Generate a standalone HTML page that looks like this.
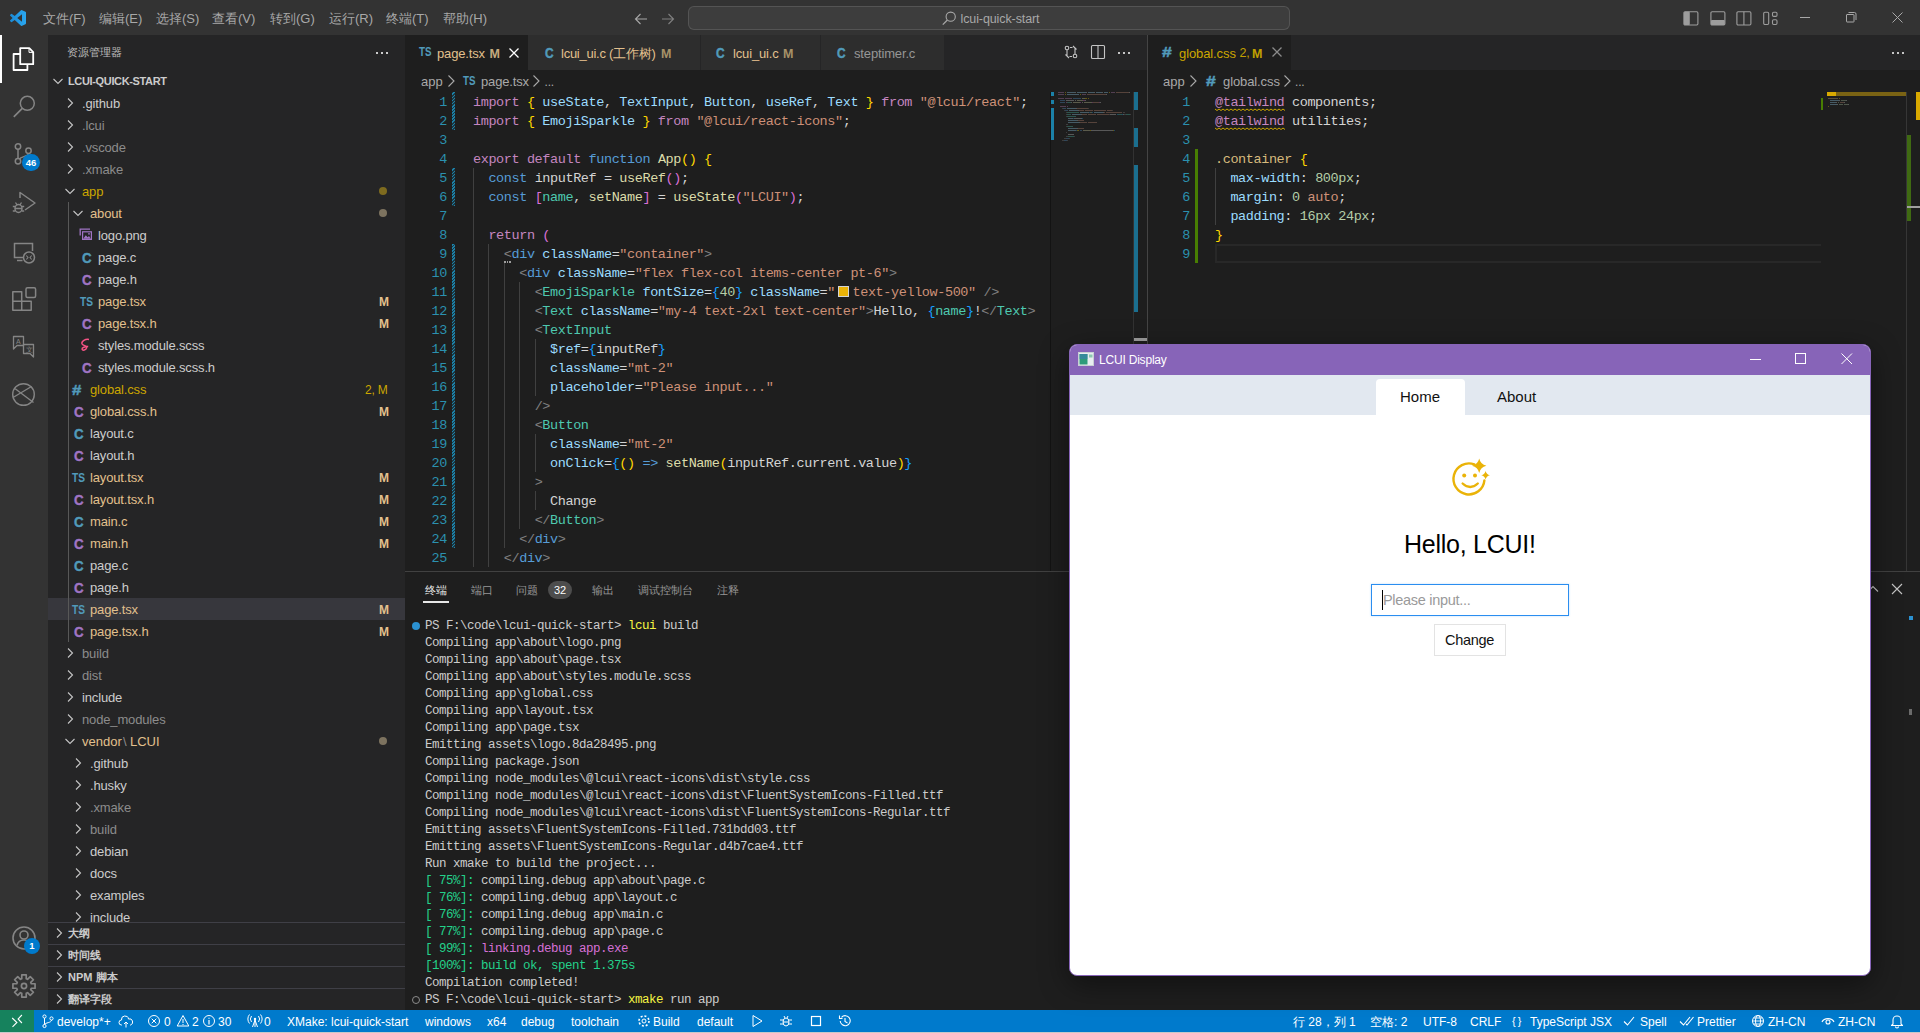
<!DOCTYPE html><html><head><meta charset="utf-8"><style>
*{box-sizing:border-box}
body{margin:0;width:1920px;height:1033px;overflow:hidden;background:#1e1e1e;position:relative;font-family:"Liberation Sans",sans-serif;color:#cccccc}
.a{position:absolute}
.t{position:absolute;white-space:pre}
svg{position:absolute;overflow:visible}
.code{position:absolute;white-space:pre;font-family:"Liberation Mono",monospace;font-size:13.5px;letter-spacing:-0.4px;line-height:19px;color:#d4d4d4}
.term{position:absolute;white-space:pre;font-family:"Liberation Mono",monospace;font-size:12.5px;letter-spacing:-0.5px;line-height:17px;color:#cccccc}
</style></head><body>
<div class="a" style="left:0px;top:0px;width:1920px;height:35px;background:#333333;"></div><svg style="left:10px;top:10px" width="16" height="16" viewBox="0 0 100 100"><defs><linearGradient id="vg" x1="0" y1="0" x2="1" y2="0"><stop offset="0" stop-color="#1b8ad6"/><stop offset="1" stop-color="#2aa7f0"/></linearGradient></defs><path d="M96.46 10.8L75.86.87a6.23 6.23 0 0 0-7.1 1.2L29.33 38.04 12.15 25a4.16 4.16 0 0 0-5.32.24L1.36 30.2a4.17 4.17 0 0 0 0 6.16L16.26 50 1.35 63.6a4.17 4.17 0 0 0 0 6.16l5.5 4.99a4.16 4.16 0 0 0 5.32.24l17.18-13.04L68.77 97.9a6.23 6.23 0 0 0 7.1 1.2l20.6-9.920a6.25 6.25 0 0 0 3.530-5.63V16.43a6.25 6.25 0 0 0-3.54-5.63zM75.02 72.7L45.11 50l29.9-22.7v45.4z" fill="url(#vg)"/></svg><div class="t" style="left:43px;top:12.0px;font-size:13px;height:13px;line-height:13px;color:#a8a8a8;font-weight:normal;font-family:'Liberation Sans',sans-serif;">文件(F)</div><div class="t" style="left:99px;top:12.0px;font-size:13px;height:13px;line-height:13px;color:#a8a8a8;font-weight:normal;font-family:'Liberation Sans',sans-serif;">编辑(E)</div><div class="t" style="left:156px;top:12.0px;font-size:13px;height:13px;line-height:13px;color:#a8a8a8;font-weight:normal;font-family:'Liberation Sans',sans-serif;">选择(S)</div><div class="t" style="left:212px;top:12.0px;font-size:13px;height:13px;line-height:13px;color:#a8a8a8;font-weight:normal;font-family:'Liberation Sans',sans-serif;">查看(V)</div><div class="t" style="left:270px;top:12.0px;font-size:13px;height:13px;line-height:13px;color:#a8a8a8;font-weight:normal;font-family:'Liberation Sans',sans-serif;">转到(G)</div><div class="t" style="left:329px;top:12.0px;font-size:13px;height:13px;line-height:13px;color:#a8a8a8;font-weight:normal;font-family:'Liberation Sans',sans-serif;">运行(R)</div><div class="t" style="left:386px;top:12.0px;font-size:13px;height:13px;line-height:13px;color:#a8a8a8;font-weight:normal;font-family:'Liberation Sans',sans-serif;">终端(T)</div><div class="t" style="left:443px;top:12.0px;font-size:13px;height:13px;line-height:13px;color:#a8a8a8;font-weight:normal;font-family:'Liberation Sans',sans-serif;">帮助(H)</div><svg style="left:633px;top:11px" width="16" height="16" viewBox="0 0 16 16"><path d="M14 8 H2.5 M7.5 3 L2.5 8 L7.5 13" stroke="#a8a8a8" stroke-width="1.1" fill="none"/></svg><svg style="left:660px;top:11px" width="16" height="16" viewBox="0 0 16 16"><path d="M2 8 H13.5 M8.5 3 L13.5 8 L8.5 13" stroke="#808080" stroke-width="1.1" fill="none"/></svg><div class="a" style="left:688px;top:6px;width:602px;height:24px;background:rgba(255,255,255,0.05);border:1px solid rgba(255,255,255,0.12);border-radius:6px"></div><svg style="left:941px;top:10px" width="16" height="16" viewBox="0 0 16 16"><circle cx="9.7" cy="6.7" r="4.6" stroke="#a8a8a8" stroke-width="1.1" fill="none"/><path d="M6.4 10 L1.8 14.6" stroke="#a8a8a8" stroke-width="1.3"/></svg><div class="t" style="left:960.5px;top:12.9px;font-size:12.5px;height:12.5px;line-height:12.5px;color:#a8a8a8;font-weight:normal;font-family:'Liberation Sans',sans-serif;letter-spacing:-0.1px;">lcui-quick-start</div><svg style="left:1683px;top:11px" width="16" height="16" viewBox="0 0 16 16"><rect x="0.9" y="0.7" width="14" height="13.3" rx="1.2" stroke="#9d9d9d" stroke-width="1.1" fill="none"/><rect x="1" y="0.8" width="5.8" height="13.1" rx="1" fill="#9d9d9d"/></svg><svg style="left:1709.5px;top:11px" width="16" height="16" viewBox="0 0 16 16"><rect x="0.9" y="0.7" width="14" height="13.3" rx="1.2" stroke="#9d9d9d" stroke-width="1.1" fill="none"/><rect x="1" y="9" width="13.8" height="4.9" rx="1" fill="#9d9d9d"/></svg><svg style="left:1735.5px;top:11px" width="16" height="16" viewBox="0 0 16 16"><rect x="0.9" y="0.7" width="14" height="13.3" rx="1.2" stroke="#9d9d9d" stroke-width="1.1" fill="none"/><path d="M7.9 0.7 V14" stroke="#9d9d9d" stroke-width="1.1"/></svg><svg style="left:1762.5px;top:11px" width="16" height="16" viewBox="0 0 16 16"><rect x="0.7" y="1.2" width="5" height="12.3" rx="1.2" stroke="#9d9d9d" stroke-width="1.1" fill="none"/><rect x="9.5" y="1.2" width="4.5" height="4.2" rx="1.2" stroke="#9d9d9d" stroke-width="1.1" fill="none"/><rect x="9.5" y="8.8" width="4.5" height="4.7" rx="1.2" stroke="#9d9d9d" stroke-width="1.1" fill="none"/></svg><div class="a" style="left:1800px;top:17px;width:10px;height:1px;background:#a8a8a8;"></div><svg style="left:1846px;top:12px" width="12" height="12" viewBox="0 0 12 12"><rect x="0.5" y="2.5" width="7.5" height="7.5" rx="0.5" stroke="#a8a8a8" fill="none"/><path d="M2.5 0.5 H8.5 A1.5 1.5 0 0 1 10 2 V8" stroke="#a8a8a8" fill="none"/></svg><svg style="left:1892px;top:12px" width="11" height="11" viewBox="0 0 11 11"><path d="M0.5 0.5 L10.5 10.5 M10.5 0.5 L0.5 10.5" stroke="#a8a8a8" stroke-width="1"/></svg><div class="a" style="left:0px;top:35px;width:48px;height:975px;background:#333333;"></div><div class="a" style="left:0px;top:35px;width:2px;height:48px;background:#ffffff;"></div><svg style="left:12px;top:47px" width="24" height="24" viewBox="0 0 24 24"><path d="M8.2 1.2 H17.3 L21.2 5.1 V17.2 H8.2 Z" stroke="#fff" stroke-width="1.8" fill="none" stroke-linejoin="round"/><path d="M17 1.5 V5.4 H21" stroke="#fff" stroke-width="1" fill="none"/><path d="M8.2 7 H1.6 V23 H15.4 V17.2" stroke="#fff" stroke-width="1.8" fill="none" stroke-linejoin="round"/></svg><svg style="left:12px;top:94px" width="24" height="24" viewBox="0 0 24 24"><circle cx="15.3" cy="9.3" r="7" stroke="#858585" stroke-width="1.5" fill="none"/><path d="M10.3 14.3 L1.8 22.8" stroke="#858585" stroke-width="1.7"/></svg><svg style="left:12px;top:142px" width="24" height="24" viewBox="0 0 24 24"><circle cx="6" cy="4.5" r="2.7" stroke="#858585" stroke-width="1.5" fill="none"/><circle cx="6" cy="19.3" r="2.7" stroke="#858585" stroke-width="1.5" fill="none"/><circle cx="16.5" cy="8.8" r="2.7" stroke="#858585" stroke-width="1.5" fill="none"/><path d="M6 7.2 V16.6 M16.5 11.5 C16.5 14.5 9 14.5 7.5 17" stroke="#858585" stroke-width="1.5" fill="none"/></svg><div class="a" style="left:22px;top:154px;width:18px;height:17px;border-radius:9px;background:#007acc;color:#fff;font-size:9.5px;font-weight:bold;text-align:center;line-height:17px">46</div><svg style="left:12px;top:191px" width="24" height="24" viewBox="0 0 24 24"><path d="M8 7 V1.5 L23 12 L13 19" stroke="#858585" stroke-width="1.5" fill="none" stroke-linejoin="round"/><ellipse cx="6.5" cy="17.5" rx="3.5" ry="4" stroke="#858585" stroke-width="1.5" fill="none"/><path d="M0.8 15.5 H3 M10 15.5 H12.2 M0.8 20 H3 M10 20 H12.2 M3.5 11.5 L5 13.8 M9.5 11.5 L8 13.8 M3 17.5 H10" stroke="#858585" stroke-width="1.3"/></svg><svg style="left:12px;top:240px" width="24" height="24" viewBox="0 0 24 24"><path d="M11 17.5 H2.5 V3.5 H20.5 V11" stroke="#858585" stroke-width="1.5" fill="none"/><path d="M5 20.5 H10.5" stroke="#858585" stroke-width="1.5"/><circle cx="17" cy="17.5" r="5.5" stroke="#858585" stroke-width="1.5" fill="#333"/><path d="M14.3 15.5 L16 17.5 L14.3 19.5 M19.7 15.5 L18 17.5 L19.7 19.5" stroke="#858585" stroke-width="1.1" fill="none"/></svg><svg style="left:12px;top:287px" width="24" height="24" viewBox="0 0 24 24"><path d="M0.8 4.8 H9.7 V14.2 H19.2 V23.2 H0.8 Z M9.7 14.2 V23.2 M0.8 14.2 H9.7" stroke="#858585" stroke-width="1.5" fill="none" stroke-linejoin="round"/><rect x="14" y="0.8" width="9.6" height="9.6" rx="1.5" stroke="#858585" stroke-width="1.5" fill="none"/></svg><svg style="left:12px;top:335px" width="24" height="24" viewBox="0 0 24 24"><path d="M1.5 1.5 H11.5 V10.5 H5 L1.5 14 Z" stroke="#858585" stroke-width="1.3" fill="none" stroke-linejoin="round"/><path d="M11.5 9.5 H21.5 V22 L18 18.5 H11.5 Z" stroke="#858585" stroke-width="1.3" fill="none" stroke-linejoin="round"/><text x="4" y="8.5" font-size="7" fill="#858585" font-family="Liberation Sans">A</text><text x="13.5" y="16.5" font-size="7" fill="#858585" font-family="Liberation Sans">文</text></svg><svg style="left:12px;top:383px" width="24" height="24" viewBox="0 0 24 24"><circle cx="11.5" cy="11.5" r="10.8" stroke="#858585" stroke-width="1.4" fill="none"/><path d="M1 14.5 L19.5 3.5 M3.2 5.8 L21.5 19.5" stroke="#858585" stroke-width="1.4"/></svg><svg style="left:12px;top:926px" width="24" height="24" viewBox="0 0 24 24"><circle cx="12" cy="12" r="11" stroke="#858585" stroke-width="1.6" fill="none"/><circle cx="12" cy="9" r="4" stroke="#858585" stroke-width="1.6" fill="none"/><path d="M5 19.5 C6 15 9 14 12 14 C15 14 18 15 19 19.5" stroke="#858585" stroke-width="1.6" fill="none"/></svg><div class="a" style="left:24px;top:938px;width:16px;height:16px;border-radius:8px;background:#007acc;color:#fff;font-size:9.5px;font-weight:bold;text-align:center;line-height:16px">1</div><svg style="left:12px;top:974px" width="24" height="24" viewBox="0 0 24 24"><path d="M23.07 9.76 L23.07 14.24 L19.26 14.25 L18.72 15.55 L21.42 18.24 L18.24 21.42 L15.55 18.72 L14.25 19.26 L14.24 23.07 L9.76 23.07 L9.75 19.26 L8.45 18.72 L5.76 21.42 L2.58 18.24 L5.28 15.55 L4.74 14.25 L0.93 14.24 L0.93 9.76 L4.74 9.75 L5.28 8.45 L2.58 5.76 L5.76 2.58 L8.45 5.28 L9.75 4.74 L9.76 0.93 L14.24 0.93 L14.25 4.74 L15.55 5.28 L18.24 2.58 L21.42 5.76 L18.72 8.45 L19.26 9.75 Z" stroke="#858585" stroke-width="1.7" fill="none" stroke-linejoin="round"/><circle cx="12" cy="12" r="2.6" stroke="#858585" stroke-width="1.7" fill="none"/></svg><div class="a" style="left:48px;top:35px;width:357px;height:975px;background:#252526;"></div><div class="t" style="left:67px;top:47.0px;font-size:11px;height:11px;line-height:11px;color:#bbbbbb;font-weight:normal;font-family:'Liberation Sans',sans-serif;">资源管理器</div><div class="a" style="left:376px;top:52px;width:2px;height:2px;background:#cccccc;"></div><div class="a" style="left:381px;top:52px;width:2px;height:2px;background:#cccccc;"></div><div class="a" style="left:386px;top:52px;width:2px;height:2px;background:#cccccc;"></div><div class="a" style="left:48px;top:70px;width:357px;height:852px;overflow:hidden"><div class="a" style="left:-48px;top:-70px;width:1920px;height:1033px"><div class="a" style="left:48px;top:598px;width:357px;height:22px;background:#37373d;"></div><div class="a" style="left:68px;top:202px;width:1px;height:440px;background:#585858;"></div><svg style="left:50px;top:73px" width="16" height="16" viewBox="0 0 16 16"><path d="M3.5 6 L8 10.5 L12.5 6" stroke="#c5c5c5" stroke-width="1.1" fill="none"/></svg><div class="t" style="left:68px;top:75.5px;font-size:11px;height:11px;line-height:11px;color:#cccccc;font-weight:bold;font-family:'Liberation Sans',sans-serif;letter-spacing:-0.35px;">LCUI-QUICK-START</div><svg style="left:62px;top:95px" width="16" height="16" viewBox="0 0 16 16"><path d="M6 3.5 L10.5 8 L6 12.5" stroke="#c5c5c5" stroke-width="1.1" fill="none"/></svg><div class="t" style="left:82px;top:96.5px;font-size:13px;height:13px;line-height:13px;color:#cccccc;font-weight:normal;font-family:'Liberation Sans',sans-serif;letter-spacing:-0.15px;">.github</div><svg style="left:62px;top:117px" width="16" height="16" viewBox="0 0 16 16"><path d="M6 3.5 L10.5 8 L6 12.5" stroke="#c5c5c5" stroke-width="1.1" fill="none"/></svg><div class="t" style="left:82px;top:118.5px;font-size:13px;height:13px;line-height:13px;color:#8c8c8c;font-weight:normal;font-family:'Liberation Sans',sans-serif;letter-spacing:-0.15px;">.lcui</div><svg style="left:62px;top:139px" width="16" height="16" viewBox="0 0 16 16"><path d="M6 3.5 L10.5 8 L6 12.5" stroke="#c5c5c5" stroke-width="1.1" fill="none"/></svg><div class="t" style="left:82px;top:140.5px;font-size:13px;height:13px;line-height:13px;color:#8c8c8c;font-weight:normal;font-family:'Liberation Sans',sans-serif;letter-spacing:-0.15px;">.vscode</div><svg style="left:62px;top:161px" width="16" height="16" viewBox="0 0 16 16"><path d="M6 3.5 L10.5 8 L6 12.5" stroke="#c5c5c5" stroke-width="1.1" fill="none"/></svg><div class="t" style="left:82px;top:162.5px;font-size:13px;height:13px;line-height:13px;color:#8c8c8c;font-weight:normal;font-family:'Liberation Sans',sans-serif;letter-spacing:-0.15px;">.xmake</div><svg style="left:62px;top:183px" width="16" height="16" viewBox="0 0 16 16"><path d="M3.5 6 L8 10.5 L12.5 6" stroke="#c5c5c5" stroke-width="1.1" fill="none"/></svg><div class="t" style="left:82px;top:184.5px;font-size:13px;height:13px;line-height:13px;color:#cca700;font-weight:normal;font-family:'Liberation Sans',sans-serif;letter-spacing:-0.15px;">app</div><div class="a" style="left:379px;top:187px;width:8px;height:8px;border-radius:4px;background:#7e6b1f"></div><svg style="left:70px;top:205px" width="16" height="16" viewBox="0 0 16 16"><path d="M3.5 6 L8 10.5 L12.5 6" stroke="#c5c5c5" stroke-width="1.1" fill="none"/></svg><div class="t" style="left:90px;top:206.5px;font-size:13px;height:13px;line-height:13px;color:#e2c08d;font-weight:normal;font-family:'Liberation Sans',sans-serif;letter-spacing:-0.15px;">about</div><div class="a" style="left:379px;top:209px;width:8px;height:8px;border-radius:4px;background:#7d735f"></div><svg style="left:79px;top:228px" width="14" height="14" viewBox="0 0 14 14"><path d="M1.2 7.5 V1.2 H11" stroke="#a074c4" stroke-width="1.3" fill="none"/><rect x="3" y="3.2" width="10" height="8.8" fill="#a074c4"/><rect x="4.2" y="4.4" width="7.6" height="6.4" fill="#252526"/><path d="M4.2 10.8 L6.8 7.2 L8.6 9.2 L10 8 L11.8 10.8 Z" fill="#a074c4"/><circle cx="10" cy="5.8" r="0.9" fill="#a074c4"/></svg><div class="t" style="left:98px;top:228.5px;font-size:13px;height:13px;line-height:13px;color:#cccccc;font-weight:normal;font-family:'Liberation Sans',sans-serif;letter-spacing:-0.15px;">logo.png</div><svg style="left:82px;top:247.0px" width="11.6" height="19.5"><text x="0" y="15.5" font-family="Liberation Sans" font-weight="bold" font-size="15.5" fill="#519aba" textLength="9.6" lengthAdjust="spacingAndGlyphs" stroke="#519aba" stroke-width="0.45">C</text></svg><div class="t" style="left:98px;top:250.5px;font-size:13px;height:13px;line-height:13px;color:#cccccc;font-weight:normal;font-family:'Liberation Sans',sans-serif;letter-spacing:-0.15px;">page.c</div><svg style="left:82px;top:269.0px" width="11.6" height="19.5"><text x="0" y="15.5" font-family="Liberation Sans" font-weight="bold" font-size="15.5" fill="#a074c4" textLength="9.6" lengthAdjust="spacingAndGlyphs" stroke="#a074c4" stroke-width="0.45">C</text></svg><div class="t" style="left:98px;top:272.5px;font-size:13px;height:13px;line-height:13px;color:#cccccc;font-weight:normal;font-family:'Liberation Sans',sans-serif;letter-spacing:-0.15px;">page.h</div><svg style="left:79.5px;top:293.0px" width="15" height="16.5"><text x="0" y="12.5" font-family="Liberation Sans" font-weight="bold" font-size="12.5" fill="#519aba" textLength="13" lengthAdjust="spacingAndGlyphs" stroke="#519aba" stroke-width="0.1">TS</text></svg><div class="t" style="left:98px;top:294.5px;font-size:13px;height:13px;line-height:13px;color:#e2c08d;font-weight:normal;font-family:'Liberation Sans',sans-serif;letter-spacing:-0.15px;">page.tsx</div><div class="t" style="left:379px;top:296.0px;font-size:12px;height:12px;line-height:12px;color:#e2c08d;font-weight:bold;font-family:'Liberation Sans',sans-serif;letter-spacing:-0.3px;">M</div><svg style="left:82px;top:313.0px" width="11.6" height="19.5"><text x="0" y="15.5" font-family="Liberation Sans" font-weight="bold" font-size="15.5" fill="#a074c4" textLength="9.6" lengthAdjust="spacingAndGlyphs" stroke="#a074c4" stroke-width="0.45">C</text></svg><div class="t" style="left:98px;top:316.5px;font-size:13px;height:13px;line-height:13px;color:#e2c08d;font-weight:normal;font-family:'Liberation Sans',sans-serif;letter-spacing:-0.15px;">page.tsx.h</div><div class="t" style="left:379px;top:318.0px;font-size:12px;height:12px;line-height:12px;color:#e2c08d;font-weight:bold;font-family:'Liberation Sans',sans-serif;letter-spacing:-0.3px;">M</div><svg style="left:79px;top:338px" width="14" height="14" viewBox="0 0 14 14"><path d="M10 1.5 C6.5 0.8 2.2 3.2 3 5.8 C3.8 8.2 8.2 7.2 7.6 9.8 C7 12.3 3.6 12.8 3.1 11.3 C2.6 9.8 6.2 8.2 9.2 8.6" stroke="#f55385" stroke-width="1.5" fill="none"/></svg><div class="t" style="left:98px;top:338.5px;font-size:13px;height:13px;line-height:13px;color:#cccccc;font-weight:normal;font-family:'Liberation Sans',sans-serif;letter-spacing:-0.15px;">styles.module.scss</div><svg style="left:82px;top:357.0px" width="11.6" height="19.5"><text x="0" y="15.5" font-family="Liberation Sans" font-weight="bold" font-size="15.5" fill="#a074c4" textLength="9.6" lengthAdjust="spacingAndGlyphs" stroke="#a074c4" stroke-width="0.45">C</text></svg><div class="t" style="left:98px;top:360.5px;font-size:13px;height:13px;line-height:13px;color:#cccccc;font-weight:normal;font-family:'Liberation Sans',sans-serif;letter-spacing:-0.15px;">styles.module.scss.h</div><svg style="left:72px;top:379.5px" width="11.4" height="18.5"><text x="0" y="14.5" font-family="Liberation Sans" font-weight="bold" font-size="14.5" fill="#519aba" textLength="9.4" lengthAdjust="spacingAndGlyphs" stroke="#519aba" stroke-width="0.45">#</text></svg><div class="t" style="left:90px;top:382.5px;font-size:13px;height:13px;line-height:13px;color:#cca700;font-weight:normal;font-family:'Liberation Sans',sans-serif;letter-spacing:-0.15px;">global.css</div><div class="t" style="left:365px;top:384.0px;font-size:12px;height:12px;line-height:12px;color:#cca700;font-weight:normal;font-family:'Liberation Sans',sans-serif;letter-spacing:-0.2px;">2, M</div><svg style="left:74px;top:401.0px" width="11.6" height="19.5"><text x="0" y="15.5" font-family="Liberation Sans" font-weight="bold" font-size="15.5" fill="#a074c4" textLength="9.6" lengthAdjust="spacingAndGlyphs" stroke="#a074c4" stroke-width="0.45">C</text></svg><div class="t" style="left:90px;top:404.5px;font-size:13px;height:13px;line-height:13px;color:#e2c08d;font-weight:normal;font-family:'Liberation Sans',sans-serif;letter-spacing:-0.15px;">global.css.h</div><div class="t" style="left:379px;top:406.0px;font-size:12px;height:12px;line-height:12px;color:#e2c08d;font-weight:bold;font-family:'Liberation Sans',sans-serif;letter-spacing:-0.3px;">M</div><svg style="left:74px;top:423.0px" width="11.6" height="19.5"><text x="0" y="15.5" font-family="Liberation Sans" font-weight="bold" font-size="15.5" fill="#519aba" textLength="9.6" lengthAdjust="spacingAndGlyphs" stroke="#519aba" stroke-width="0.45">C</text></svg><div class="t" style="left:90px;top:426.5px;font-size:13px;height:13px;line-height:13px;color:#cccccc;font-weight:normal;font-family:'Liberation Sans',sans-serif;letter-spacing:-0.15px;">layout.c</div><svg style="left:74px;top:445.0px" width="11.6" height="19.5"><text x="0" y="15.5" font-family="Liberation Sans" font-weight="bold" font-size="15.5" fill="#a074c4" textLength="9.6" lengthAdjust="spacingAndGlyphs" stroke="#a074c4" stroke-width="0.45">C</text></svg><div class="t" style="left:90px;top:448.5px;font-size:13px;height:13px;line-height:13px;color:#cccccc;font-weight:normal;font-family:'Liberation Sans',sans-serif;letter-spacing:-0.15px;">layout.h</div><svg style="left:71.5px;top:469.0px" width="15" height="16.5"><text x="0" y="12.5" font-family="Liberation Sans" font-weight="bold" font-size="12.5" fill="#519aba" textLength="13" lengthAdjust="spacingAndGlyphs" stroke="#519aba" stroke-width="0.1">TS</text></svg><div class="t" style="left:90px;top:470.5px;font-size:13px;height:13px;line-height:13px;color:#e2c08d;font-weight:normal;font-family:'Liberation Sans',sans-serif;letter-spacing:-0.15px;">layout.tsx</div><div class="t" style="left:379px;top:472.0px;font-size:12px;height:12px;line-height:12px;color:#e2c08d;font-weight:bold;font-family:'Liberation Sans',sans-serif;letter-spacing:-0.3px;">M</div><svg style="left:74px;top:489.0px" width="11.6" height="19.5"><text x="0" y="15.5" font-family="Liberation Sans" font-weight="bold" font-size="15.5" fill="#a074c4" textLength="9.6" lengthAdjust="spacingAndGlyphs" stroke="#a074c4" stroke-width="0.45">C</text></svg><div class="t" style="left:90px;top:492.5px;font-size:13px;height:13px;line-height:13px;color:#e2c08d;font-weight:normal;font-family:'Liberation Sans',sans-serif;letter-spacing:-0.15px;">layout.tsx.h</div><div class="t" style="left:379px;top:494.0px;font-size:12px;height:12px;line-height:12px;color:#e2c08d;font-weight:bold;font-family:'Liberation Sans',sans-serif;letter-spacing:-0.3px;">M</div><svg style="left:74px;top:511.0px" width="11.6" height="19.5"><text x="0" y="15.5" font-family="Liberation Sans" font-weight="bold" font-size="15.5" fill="#519aba" textLength="9.6" lengthAdjust="spacingAndGlyphs" stroke="#519aba" stroke-width="0.45">C</text></svg><div class="t" style="left:90px;top:514.5px;font-size:13px;height:13px;line-height:13px;color:#e2c08d;font-weight:normal;font-family:'Liberation Sans',sans-serif;letter-spacing:-0.15px;">main.c</div><div class="t" style="left:379px;top:516.0px;font-size:12px;height:12px;line-height:12px;color:#e2c08d;font-weight:bold;font-family:'Liberation Sans',sans-serif;letter-spacing:-0.3px;">M</div><svg style="left:74px;top:533.0px" width="11.6" height="19.5"><text x="0" y="15.5" font-family="Liberation Sans" font-weight="bold" font-size="15.5" fill="#a074c4" textLength="9.6" lengthAdjust="spacingAndGlyphs" stroke="#a074c4" stroke-width="0.45">C</text></svg><div class="t" style="left:90px;top:536.5px;font-size:13px;height:13px;line-height:13px;color:#e2c08d;font-weight:normal;font-family:'Liberation Sans',sans-serif;letter-spacing:-0.15px;">main.h</div><div class="t" style="left:379px;top:538.0px;font-size:12px;height:12px;line-height:12px;color:#e2c08d;font-weight:bold;font-family:'Liberation Sans',sans-serif;letter-spacing:-0.3px;">M</div><svg style="left:74px;top:555.0px" width="11.6" height="19.5"><text x="0" y="15.5" font-family="Liberation Sans" font-weight="bold" font-size="15.5" fill="#519aba" textLength="9.6" lengthAdjust="spacingAndGlyphs" stroke="#519aba" stroke-width="0.45">C</text></svg><div class="t" style="left:90px;top:558.5px;font-size:13px;height:13px;line-height:13px;color:#cccccc;font-weight:normal;font-family:'Liberation Sans',sans-serif;letter-spacing:-0.15px;">page.c</div><svg style="left:74px;top:577.0px" width="11.6" height="19.5"><text x="0" y="15.5" font-family="Liberation Sans" font-weight="bold" font-size="15.5" fill="#a074c4" textLength="9.6" lengthAdjust="spacingAndGlyphs" stroke="#a074c4" stroke-width="0.45">C</text></svg><div class="t" style="left:90px;top:580.5px;font-size:13px;height:13px;line-height:13px;color:#cccccc;font-weight:normal;font-family:'Liberation Sans',sans-serif;letter-spacing:-0.15px;">page.h</div><svg style="left:71.5px;top:601.0px" width="15" height="16.5"><text x="0" y="12.5" font-family="Liberation Sans" font-weight="bold" font-size="12.5" fill="#519aba" textLength="13" lengthAdjust="spacingAndGlyphs" stroke="#519aba" stroke-width="0.1">TS</text></svg><div class="t" style="left:90px;top:602.5px;font-size:13px;height:13px;line-height:13px;color:#e2c08d;font-weight:normal;font-family:'Liberation Sans',sans-serif;letter-spacing:-0.15px;">page.tsx</div><div class="t" style="left:379px;top:604.0px;font-size:12px;height:12px;line-height:12px;color:#e2c08d;font-weight:bold;font-family:'Liberation Sans',sans-serif;letter-spacing:-0.3px;">M</div><svg style="left:74px;top:621.0px" width="11.6" height="19.5"><text x="0" y="15.5" font-family="Liberation Sans" font-weight="bold" font-size="15.5" fill="#a074c4" textLength="9.6" lengthAdjust="spacingAndGlyphs" stroke="#a074c4" stroke-width="0.45">C</text></svg><div class="t" style="left:90px;top:624.5px;font-size:13px;height:13px;line-height:13px;color:#e2c08d;font-weight:normal;font-family:'Liberation Sans',sans-serif;letter-spacing:-0.15px;">page.tsx.h</div><div class="t" style="left:379px;top:626.0px;font-size:12px;height:12px;line-height:12px;color:#e2c08d;font-weight:bold;font-family:'Liberation Sans',sans-serif;letter-spacing:-0.3px;">M</div><svg style="left:62px;top:645px" width="16" height="16" viewBox="0 0 16 16"><path d="M6 3.5 L10.5 8 L6 12.5" stroke="#c5c5c5" stroke-width="1.1" fill="none"/></svg><div class="t" style="left:82px;top:646.5px;font-size:13px;height:13px;line-height:13px;color:#8c8c8c;font-weight:normal;font-family:'Liberation Sans',sans-serif;letter-spacing:-0.15px;">build</div><svg style="left:62px;top:667px" width="16" height="16" viewBox="0 0 16 16"><path d="M6 3.5 L10.5 8 L6 12.5" stroke="#c5c5c5" stroke-width="1.1" fill="none"/></svg><div class="t" style="left:82px;top:668.5px;font-size:13px;height:13px;line-height:13px;color:#8c8c8c;font-weight:normal;font-family:'Liberation Sans',sans-serif;letter-spacing:-0.15px;">dist</div><svg style="left:62px;top:689px" width="16" height="16" viewBox="0 0 16 16"><path d="M6 3.5 L10.5 8 L6 12.5" stroke="#c5c5c5" stroke-width="1.1" fill="none"/></svg><div class="t" style="left:82px;top:690.5px;font-size:13px;height:13px;line-height:13px;color:#cccccc;font-weight:normal;font-family:'Liberation Sans',sans-serif;letter-spacing:-0.15px;">include</div><svg style="left:62px;top:711px" width="16" height="16" viewBox="0 0 16 16"><path d="M6 3.5 L10.5 8 L6 12.5" stroke="#c5c5c5" stroke-width="1.1" fill="none"/></svg><div class="t" style="left:82px;top:712.5px;font-size:13px;height:13px;line-height:13px;color:#8c8c8c;font-weight:normal;font-family:'Liberation Sans',sans-serif;letter-spacing:-0.15px;">node_modules</div><svg style="left:62px;top:733px" width="16" height="16" viewBox="0 0 16 16"><path d="M3.5 6 L8 10.5 L12.5 6" stroke="#c5c5c5" stroke-width="1.1" fill="none"/></svg><div class="t" style="left:82px;top:734.5px;font-size:13px;height:13px;line-height:13px;color:#e2c08d;font-weight:normal;font-family:'Liberation Sans',sans-serif;">vendor</div><div class="t" style="left:123px;top:734.5px;font-size:13px;height:13px;line-height:13px;color:#8c8c8c;font-weight:normal;font-family:'Liberation Sans',sans-serif;">\</div><div class="t" style="left:130px;top:734.5px;font-size:13px;height:13px;line-height:13px;color:#e2c08d;font-weight:normal;font-family:'Liberation Sans',sans-serif;">LCUI</div><div class="a" style="left:379px;top:737px;width:8px;height:8px;border-radius:4px;background:#7d735f"></div><svg style="left:70px;top:755px" width="16" height="16" viewBox="0 0 16 16"><path d="M6 3.5 L10.5 8 L6 12.5" stroke="#c5c5c5" stroke-width="1.1" fill="none"/></svg><div class="t" style="left:90px;top:756.5px;font-size:13px;height:13px;line-height:13px;color:#cccccc;font-weight:normal;font-family:'Liberation Sans',sans-serif;letter-spacing:-0.15px;">.github</div><svg style="left:70px;top:777px" width="16" height="16" viewBox="0 0 16 16"><path d="M6 3.5 L10.5 8 L6 12.5" stroke="#c5c5c5" stroke-width="1.1" fill="none"/></svg><div class="t" style="left:90px;top:778.5px;font-size:13px;height:13px;line-height:13px;color:#cccccc;font-weight:normal;font-family:'Liberation Sans',sans-serif;letter-spacing:-0.15px;">.husky</div><svg style="left:70px;top:799px" width="16" height="16" viewBox="0 0 16 16"><path d="M6 3.5 L10.5 8 L6 12.5" stroke="#c5c5c5" stroke-width="1.1" fill="none"/></svg><div class="t" style="left:90px;top:800.5px;font-size:13px;height:13px;line-height:13px;color:#8c8c8c;font-weight:normal;font-family:'Liberation Sans',sans-serif;letter-spacing:-0.15px;">.xmake</div><svg style="left:70px;top:821px" width="16" height="16" viewBox="0 0 16 16"><path d="M6 3.5 L10.5 8 L6 12.5" stroke="#c5c5c5" stroke-width="1.1" fill="none"/></svg><div class="t" style="left:90px;top:822.5px;font-size:13px;height:13px;line-height:13px;color:#8c8c8c;font-weight:normal;font-family:'Liberation Sans',sans-serif;letter-spacing:-0.15px;">build</div><svg style="left:70px;top:843px" width="16" height="16" viewBox="0 0 16 16"><path d="M6 3.5 L10.5 8 L6 12.5" stroke="#c5c5c5" stroke-width="1.1" fill="none"/></svg><div class="t" style="left:90px;top:844.5px;font-size:13px;height:13px;line-height:13px;color:#cccccc;font-weight:normal;font-family:'Liberation Sans',sans-serif;letter-spacing:-0.15px;">debian</div><svg style="left:70px;top:865px" width="16" height="16" viewBox="0 0 16 16"><path d="M6 3.5 L10.5 8 L6 12.5" stroke="#c5c5c5" stroke-width="1.1" fill="none"/></svg><div class="t" style="left:90px;top:866.5px;font-size:13px;height:13px;line-height:13px;color:#cccccc;font-weight:normal;font-family:'Liberation Sans',sans-serif;letter-spacing:-0.15px;">docs</div><svg style="left:70px;top:887px" width="16" height="16" viewBox="0 0 16 16"><path d="M6 3.5 L10.5 8 L6 12.5" stroke="#c5c5c5" stroke-width="1.1" fill="none"/></svg><div class="t" style="left:90px;top:888.5px;font-size:13px;height:13px;line-height:13px;color:#cccccc;font-weight:normal;font-family:'Liberation Sans',sans-serif;letter-spacing:-0.15px;">examples</div><svg style="left:70px;top:909px" width="16" height="16" viewBox="0 0 16 16"><path d="M6 3.5 L10.5 8 L6 12.5" stroke="#c5c5c5" stroke-width="1.1" fill="none"/></svg><div class="t" style="left:90px;top:910.5px;font-size:13px;height:13px;line-height:13px;color:#cccccc;font-weight:normal;font-family:'Liberation Sans',sans-serif;letter-spacing:-0.15px;">include</div></div></div><div class="a" style="left:401px;top:571px;width:4px;height:0px;background:#4f4f4f;"></div><div class="a" style="left:48px;top:922px;width:357px;height:1px;background:#3f3f46;"></div><svg style="left:51px;top:925px" width="16" height="16" viewBox="0 0 16 16"><path d="M6 3.5 L10.5 8 L6 12.5" stroke="#c5c5c5" stroke-width="1.1" fill="none"/></svg><div class="t" style="left:68px;top:928.0px;font-size:11px;height:11px;line-height:11px;color:#cccccc;font-weight:bold;font-family:'Liberation Sans',sans-serif;">大纲</div><div class="a" style="left:48px;top:944px;width:357px;height:1px;background:#3f3f46;"></div><svg style="left:51px;top:947px" width="16" height="16" viewBox="0 0 16 16"><path d="M6 3.5 L10.5 8 L6 12.5" stroke="#c5c5c5" stroke-width="1.1" fill="none"/></svg><div class="t" style="left:68px;top:950.0px;font-size:11px;height:11px;line-height:11px;color:#cccccc;font-weight:bold;font-family:'Liberation Sans',sans-serif;">时间线</div><div class="a" style="left:48px;top:966px;width:357px;height:1px;background:#3f3f46;"></div><svg style="left:51px;top:969px" width="16" height="16" viewBox="0 0 16 16"><path d="M6 3.5 L10.5 8 L6 12.5" stroke="#c5c5c5" stroke-width="1.1" fill="none"/></svg><div class="t" style="left:68px;top:972.0px;font-size:11px;height:11px;line-height:11px;color:#cccccc;font-weight:bold;font-family:'Liberation Sans',sans-serif;">NPM 脚本</div><div class="a" style="left:48px;top:988px;width:357px;height:1px;background:#3f3f46;"></div><svg style="left:51px;top:991px" width="16" height="16" viewBox="0 0 16 16"><path d="M6 3.5 L10.5 8 L6 12.5" stroke="#c5c5c5" stroke-width="1.1" fill="none"/></svg><div class="t" style="left:68px;top:994.0px;font-size:11px;height:11px;line-height:11px;color:#cccccc;font-weight:bold;font-family:'Liberation Sans',sans-serif;">翻译字段</div><div class="a" style="left:405px;top:35px;width:742px;height:35px;background:#252526;"></div><div class="a" style="left:405px;top:35px;width:123px;height:35px;background:#1e1e1e;"></div><svg style="left:418.5px;top:44px" width="14.5" height="16"><text x="0" y="12" font-family="Liberation Sans" font-weight="bold" font-size="12" fill="#519aba" textLength="12.5" lengthAdjust="spacingAndGlyphs" stroke="#519aba" stroke-width="0.1">TS</text></svg><div class="t" style="left:437px;top:46.5px;font-size:13px;height:13px;line-height:13px;color:#e2c08d;font-weight:normal;font-family:'Liberation Sans',sans-serif;letter-spacing:-0.15px;">page.tsx</div><div class="t" style="left:489.5px;top:47.5px;font-size:12.5px;height:12.5px;line-height:12.5px;color:#c5ab7f;font-weight:bold;font-family:'Liberation Sans',sans-serif;letter-spacing:-0.5px;">M</div><svg style="left:507px;top:46px" width="14" height="14" viewBox="0 0 14 14"><path d="M2.5 2.5 L11.5 11.5 M11.5 2.5 L2.5 11.5" stroke="#ffffff" stroke-width="1.3"/></svg><div class="a" style="left:528px;top:35px;width:173px;height:35px;background:#2d2d2d;"></div><div class="a" style="left:700px;top:35px;width:1px;height:35px;background:#252526;"></div><svg style="left:545px;top:42.7px" width="10.6" height="18.5"><text x="0" y="14.5" font-family="Liberation Sans" font-weight="bold" font-size="14.5" fill="#519aba" textLength="8.6" lengthAdjust="spacingAndGlyphs" stroke="#519aba" stroke-width="0.45">C</text></svg><div class="t" style="left:561px;top:46.5px;font-size:13px;height:13px;line-height:13px;color:#e2c08d;font-weight:normal;font-family:'Liberation Sans',sans-serif;letter-spacing:-0.25px;">lcui_ui.c (工作树)</div><div class="t" style="left:661px;top:47.5px;font-size:12.5px;height:12.5px;line-height:12.5px;color:#a89268;font-weight:bold;font-family:'Liberation Sans',sans-serif;letter-spacing:-0.5px;">M</div><div class="a" style="left:701px;top:35px;width:120px;height:35px;background:#2d2d2d;"></div><div class="a" style="left:820px;top:35px;width:1px;height:35px;background:#252526;"></div><svg style="left:716px;top:42.7px" width="10.6" height="18.5"><text x="0" y="14.5" font-family="Liberation Sans" font-weight="bold" font-size="14.5" fill="#519aba" textLength="8.6" lengthAdjust="spacingAndGlyphs" stroke="#519aba" stroke-width="0.45">C</text></svg><div class="t" style="left:733px;top:46.5px;font-size:13px;height:13px;line-height:13px;color:#e2c08d;font-weight:normal;font-family:'Liberation Sans',sans-serif;letter-spacing:-0.15px;">lcui_ui.c</div><div class="t" style="left:783px;top:47.5px;font-size:12.5px;height:12.5px;line-height:12.5px;color:#a89268;font-weight:bold;font-family:'Liberation Sans',sans-serif;letter-spacing:-0.5px;">M</div><div class="a" style="left:821px;top:35px;width:124px;height:35px;background:#2d2d2d;"></div><div class="a" style="left:944px;top:35px;width:1px;height:35px;background:#252526;"></div><svg style="left:837px;top:42.7px" width="10.6" height="18.5"><text x="0" y="14.5" font-family="Liberation Sans" font-weight="bold" font-size="14.5" fill="#519aba" textLength="8.6" lengthAdjust="spacingAndGlyphs" stroke="#519aba" stroke-width="0.45">C</text></svg><div class="t" style="left:854px;top:46.5px;font-size:13px;height:13px;line-height:13px;color:#969696;font-weight:normal;font-family:'Liberation Sans',sans-serif;letter-spacing:-0.15px;">steptimer.c</div><svg style="left:1063px;top:44px" width="16" height="16" viewBox="0 0 16 16"><circle cx="4" cy="4" r="1.8" stroke="#c5c5c5" stroke-width="1.1" fill="none"/><circle cx="12" cy="12" r="1.8" stroke="#c5c5c5" stroke-width="1.1" fill="none"/><path d="M4 6 V12 L6 14 M2.5 10.5 L4 12 M12 10 V4 L10 2 M13.5 5.5 L12 4" stroke="#c5c5c5" stroke-width="1.1" fill="none"/><path d="M6.5 12.5 H9 M7 3.5 H9.5" stroke="#c5c5c5" stroke-width="1.1"/></svg><svg style="left:1090px;top:44px" width="16" height="16" viewBox="0 0 16 16"><rect x="1.5" y="1.5" width="13" height="13" rx="1" stroke="#c5c5c5" stroke-width="1.1" fill="none"/><path d="M8 1.5 V14.5" stroke="#c5c5c5" stroke-width="1.1"/></svg><div class="a" style="left:1118px;top:52px;width:2px;height:2px;background:#c5c5c5;"></div><div class="a" style="left:1123px;top:52px;width:2px;height:2px;background:#c5c5c5;"></div><div class="a" style="left:1128px;top:52px;width:2px;height:2px;background:#c5c5c5;"></div><div class="t" style="left:421px;top:75.0px;font-size:13px;height:13px;line-height:13px;color:#a9a9a9;font-weight:normal;font-family:'Liberation Sans',sans-serif;">app</div><svg style="left:442.5px;top:73px" width="16" height="16" viewBox="0 0 16 16"><path d="M5.5 2.5 L11 8 L5.5 13.5" stroke="#a9a9a9" stroke-width="1.1" fill="none"/></svg><svg style="left:462.5px;top:73px" width="14.5" height="16"><text x="0" y="12" font-family="Liberation Sans" font-weight="bold" font-size="12" fill="#519aba" textLength="12.5" lengthAdjust="spacingAndGlyphs" stroke="#519aba" stroke-width="0.1">TS</text></svg><div class="t" style="left:481px;top:75.0px;font-size:13px;height:13px;line-height:13px;color:#a9a9a9;font-weight:normal;font-family:'Liberation Sans',sans-serif;letter-spacing:-0.15px;">page.tsx</div><svg style="left:528px;top:73px" width="16" height="16" viewBox="0 0 16 16"><path d="M5.5 2.5 L11 8 L5.5 13.5" stroke="#a9a9a9" stroke-width="1.1" fill="none"/></svg><div class="t" style="left:544.5px;top:75.5px;font-size:12px;height:12px;line-height:12px;color:#a9a9a9;font-weight:normal;font-family:'Liberation Sans',sans-serif;letter-spacing:-0.2px;">...</div><div class="a" style="left:405px;top:92px;width:742px;height:479px;overflow:hidden"><div class="a" style="left:-405px;top:-92px;width:1920px;height:1033px"><div class="code" style="left:439.3px;top:93px;color:#2b91af">1</div><div class="code" style="left:439.3px;top:112px;color:#2b91af">2</div><div class="code" style="left:439.3px;top:131px;color:#2b91af">3</div><div class="code" style="left:439.3px;top:150px;color:#2b91af">4</div><div class="code" style="left:439.3px;top:169px;color:#2b91af">5</div><div class="code" style="left:439.3px;top:188px;color:#2b91af">6</div><div class="code" style="left:439.3px;top:207px;color:#2b91af">7</div><div class="code" style="left:439.3px;top:226px;color:#2b91af">8</div><div class="code" style="left:439.3px;top:245px;color:#2b91af">9</div><div class="code" style="left:431.6px;top:264px;color:#2b91af">10</div><div class="code" style="left:431.6px;top:283px;color:#2b91af">11</div><div class="code" style="left:431.6px;top:302px;color:#2b91af">12</div><div class="code" style="left:431.6px;top:321px;color:#2b91af">13</div><div class="code" style="left:431.6px;top:340px;color:#2b91af">14</div><div class="code" style="left:431.6px;top:359px;color:#2b91af">15</div><div class="code" style="left:431.6px;top:378px;color:#2b91af">16</div><div class="code" style="left:431.6px;top:397px;color:#2b91af">17</div><div class="code" style="left:431.6px;top:416px;color:#2b91af">18</div><div class="code" style="left:431.6px;top:435px;color:#2b91af">19</div><div class="code" style="left:431.6px;top:454px;color:#2b91af">20</div><div class="code" style="left:431.6px;top:473px;color:#2b91af">21</div><div class="code" style="left:431.6px;top:492px;color:#2b91af">22</div><div class="code" style="left:431.6px;top:511px;color:#2b91af">23</div><div class="code" style="left:431.6px;top:530px;color:#2b91af">24</div><div class="code" style="left:431.6px;top:549px;color:#2b91af">25</div><div class="a" style="left:452px;top:92px;width:3px;height:38px;background:repeating-linear-gradient(-45deg,#1b81a8 0px,#1b81a8 1.2px,rgba(27,129,168,0.25) 1.2px,rgba(27,129,168,0.25) 2.2px);"></div><div class="a" style="left:452px;top:168px;width:3px;height:38px;background:repeating-linear-gradient(-45deg,#1b81a8 0px,#1b81a8 1.2px,rgba(27,129,168,0.25) 1.2px,rgba(27,129,168,0.25) 2.2px);"></div><div class="a" style="left:452px;top:244px;width:3px;height:304px;background:repeating-linear-gradient(-45deg,#1b81a8 0px,#1b81a8 1.2px,rgba(27,129,168,0.25) 1.2px,rgba(27,129,168,0.25) 2.2px);"></div><div class="a" style="left:473px;top:168px;width:1px;height:399px;background:#404040;"></div><div class="a" style="left:488px;top:244px;width:1px;height:323px;background:#404040;"></div><div class="a" style="left:504px;top:263px;width:1px;height:285px;background:#404040;"></div><div class="a" style="left:519px;top:282px;width:1px;height:247px;background:#404040;"></div><div class="a" style="left:535px;top:339px;width:1px;height:57px;background:#404040;"></div><div class="a" style="left:535px;top:434px;width:1px;height:38px;background:#404040;"></div><div class="a" style="left:535px;top:491px;width:1px;height:19px;background:#404040;"></div><div class="code" style="left:473px;top:93px"><span style="color:#c586c0">import</span><span style="color:#d4d4d4"> </span><span style="color:#ffd700">{</span><span style="color:#9cdcfe"> useState</span><span style="color:#d4d4d4">, </span><span style="color:#9cdcfe">TextInput</span><span style="color:#d4d4d4">, </span><span style="color:#9cdcfe">Button</span><span style="color:#d4d4d4">, </span><span style="color:#9cdcfe">useRef</span><span style="color:#d4d4d4">, </span><span style="color:#9cdcfe">Text</span><span style="color:#d4d4d4"> </span><span style="color:#ffd700">}</span><span style="color:#d4d4d4"> </span><span style="color:#c586c0">from</span><span style="color:#d4d4d4"> </span><span style="color:#ce9178">"@lcui/react"</span><span style="color:#d4d4d4">;</span>
<span style="color:#c586c0">import</span><span style="color:#d4d4d4"> </span><span style="color:#ffd700">{</span><span style="color:#9cdcfe"> EmojiSparkle</span><span style="color:#d4d4d4"> </span><span style="color:#ffd700">}</span><span style="color:#d4d4d4"> </span><span style="color:#c586c0">from</span><span style="color:#d4d4d4"> </span><span style="color:#ce9178">"@lcui/react-icons"</span><span style="color:#d4d4d4">;</span>

<span style="color:#c586c0">export</span><span style="color:#d4d4d4"> </span><span style="color:#c586c0">default</span><span style="color:#d4d4d4"> </span><span style="color:#569cd6">function</span><span style="color:#d4d4d4"> </span><span style="color:#dcdcaa">App</span><span style="color:#ffd700">()</span><span style="color:#d4d4d4"> </span><span style="color:#ffd700">{</span>
<span style="color:#d4d4d4">  </span><span style="color:#569cd6">const</span><span style="color:#d4d4d4"> </span><span style="color:#d4d4d4">inputRef</span><span style="color:#d4d4d4"> = </span><span style="color:#dcdcaa">useRef</span><span style="color:#da70d6">()</span><span style="color:#d4d4d4">;</span>
<span style="color:#d4d4d4">  </span><span style="color:#569cd6">const</span><span style="color:#d4d4d4"> </span><span style="color:#da70d6">[</span><span style="color:#4ec9b0">name</span><span style="color:#d4d4d4">, </span><span style="color:#dcdcaa">setName</span><span style="color:#da70d6">]</span><span style="color:#d4d4d4"> = </span><span style="color:#dcdcaa">useState</span><span style="color:#da70d6">(</span><span style="color:#ce9178">"LCUI"</span><span style="color:#da70d6">)</span><span style="color:#d4d4d4">;</span>

<span style="color:#d4d4d4">  </span><span style="color:#c586c0">return</span><span style="color:#d4d4d4"> </span><span style="color:#da70d6">(</span>
<span style="color:#d4d4d4">    </span><span style="color:#808080">&lt;</span><span style="color:#569cd6">div</span><span style="color:#d4d4d4"> </span><span style="color:#9cdcfe">className</span><span style="color:#d4d4d4">=</span><span style="color:#ce9178">"container"</span><span style="color:#808080">&gt;</span>
<span style="color:#d4d4d4">      </span><span style="color:#808080">&lt;</span><span style="color:#569cd6">div</span><span style="color:#d4d4d4"> </span><span style="color:#9cdcfe">className</span><span style="color:#d4d4d4">=</span><span style="color:#ce9178">"flex flex-col items-center pt-6"</span><span style="color:#808080">&gt;</span>
<span style="color:#d4d4d4">        </span><span style="color:#808080">&lt;</span><span style="color:#4ec9b0">EmojiSparkle</span><span style="color:#d4d4d4"> </span><span style="color:#9cdcfe">fontSize</span><span style="color:#d4d4d4">=</span><span style="color:#179fff">{</span><span style="color:#b5cea8">40</span><span style="color:#179fff">}</span><span style="color:#d4d4d4"> </span><span style="color:#9cdcfe">className</span><span style="color:#d4d4d4">=</span><span style="color:#ce9178">"</span><span style="display:inline-block;width:11px;height:11px;margin:0 3.5px 0 3px;background:#eab308;border:1px solid #d4d4d4;vertical-align:-1px;letter-spacing:0"></span><span style="color:#ce9178">text-yellow-500"</span><span style="color:#d4d4d4"> </span><span style="color:#808080">/&gt;</span>
<span style="color:#d4d4d4">        </span><span style="color:#808080">&lt;</span><span style="color:#4ec9b0">Text</span><span style="color:#d4d4d4"> </span><span style="color:#9cdcfe">className</span><span style="color:#d4d4d4">=</span><span style="color:#ce9178">"my-4 text-2xl text-center"</span><span style="color:#808080">&gt;</span><span style="color:#d4d4d4">Hello, </span><span style="color:#179fff">{</span><span style="color:#4ec9b0">name</span><span style="color:#179fff">}</span><span style="color:#d4d4d4">!</span><span style="color:#808080">&lt;/</span><span style="color:#4ec9b0">Text</span><span style="color:#808080">&gt;</span>
<span style="color:#d4d4d4">        </span><span style="color:#808080">&lt;</span><span style="color:#4ec9b0">TextInput</span>
<span style="color:#d4d4d4">          </span><span style="color:#9cdcfe">$ref</span><span style="color:#d4d4d4">=</span><span style="color:#179fff">{</span><span style="color:#d4d4d4">inputRef</span><span style="color:#179fff">}</span>
<span style="color:#d4d4d4">          </span><span style="color:#9cdcfe">className</span><span style="color:#d4d4d4">=</span><span style="color:#ce9178">"mt-2"</span>
<span style="color:#d4d4d4">          </span><span style="color:#9cdcfe">placeholder</span><span style="color:#d4d4d4">=</span><span style="color:#ce9178">"Please input..."</span>
<span style="color:#d4d4d4">        </span><span style="color:#808080">/&gt;</span>
<span style="color:#d4d4d4">        </span><span style="color:#808080">&lt;</span><span style="color:#4ec9b0">Button</span>
<span style="color:#d4d4d4">          </span><span style="color:#9cdcfe">className</span><span style="color:#d4d4d4">=</span><span style="color:#ce9178">"mt-2"</span>
<span style="color:#d4d4d4">          </span><span style="color:#9cdcfe">onClick</span><span style="color:#d4d4d4">=</span><span style="color:#179fff">{</span><span style="color:#ffd700">()</span><span style="color:#d4d4d4"> </span><span style="color:#569cd6">=&gt;</span><span style="color:#d4d4d4"> </span><span style="color:#dcdcaa">setName</span><span style="color:#ffd700">(</span><span style="color:#d4d4d4">inputRef</span><span style="color:#d4d4d4">.</span><span style="color:#d4d4d4">current</span><span style="color:#d4d4d4">.</span><span style="color:#d4d4d4">value</span><span style="color:#ffd700">)</span><span style="color:#179fff">}</span>
<span style="color:#d4d4d4">        </span><span style="color:#808080">&gt;</span>
<span style="color:#d4d4d4">          </span><span style="color:#d4d4d4">Change</span>
<span style="color:#d4d4d4">        </span><span style="color:#808080">&lt;/</span><span style="color:#4ec9b0">Button</span><span style="color:#808080">&gt;</span>
<span style="color:#d4d4d4">      </span><span style="color:#808080">&lt;/</span><span style="color:#569cd6">div</span><span style="color:#808080">&gt;</span>
<span style="color:#d4d4d4">    </span><span style="color:#808080">&lt;/</span><span style="color:#569cd6">div</span><span style="color:#808080">&gt;</span>
</div><div class="a" style="left:504.0px;top:261px;width:1.5px;height:1.5px;background:#9e9e9e;"></div><div class="a" style="left:506.5px;top:261px;width:1.5px;height:1.5px;background:#9e9e9e;"></div><div class="a" style="left:509.0px;top:261px;width:1.5px;height:1.5px;background:#9e9e9e;"></div></div></div><div class="a" style="left:1050px;top:92px;width:1px;height:479px;background:rgba(0,0,0,0.35);"></div><div class="a" style="left:1058.0px;top:92px;width:6.0px;height:1.3px;background:#c586c0;opacity:0.32"></div><div class="a" style="left:1065.0px;top:92px;width:1.0px;height:1.3px;background:#ffd700;opacity:0.32"></div><div class="a" style="left:1067.0px;top:92px;width:8.0px;height:1.3px;background:#9cdcfe;opacity:0.32"></div><div class="a" style="left:1075.0px;top:92px;width:1.0px;height:1.3px;background:#d4d4d4;opacity:0.32"></div><div class="a" style="left:1077.0px;top:92px;width:9.0px;height:1.3px;background:#9cdcfe;opacity:0.32"></div><div class="a" style="left:1086.0px;top:92px;width:1.0px;height:1.3px;background:#d4d4d4;opacity:0.32"></div><div class="a" style="left:1088.0px;top:92px;width:6.0px;height:1.3px;background:#9cdcfe;opacity:0.32"></div><div class="a" style="left:1094.0px;top:92px;width:1.0px;height:1.3px;background:#d4d4d4;opacity:0.32"></div><div class="a" style="left:1096.0px;top:92px;width:6.0px;height:1.3px;background:#9cdcfe;opacity:0.32"></div><div class="a" style="left:1102.0px;top:92px;width:1.0px;height:1.3px;background:#d4d4d4;opacity:0.32"></div><div class="a" style="left:1104.0px;top:92px;width:4.0px;height:1.3px;background:#9cdcfe;opacity:0.32"></div><div class="a" style="left:1109.0px;top:92px;width:1.0px;height:1.3px;background:#ffd700;opacity:0.32"></div><div class="a" style="left:1111.0px;top:92px;width:4.0px;height:1.3px;background:#c586c0;opacity:0.32"></div><div class="a" style="left:1116.0px;top:92px;width:13.0px;height:1.3px;background:#ce9178;opacity:0.32"></div><div class="a" style="left:1129.0px;top:92px;width:1.0px;height:1.3px;background:#d4d4d4;opacity:0.32"></div><div class="a" style="left:1058.0px;top:94px;width:6.0px;height:1.3px;background:#c586c0;opacity:0.32"></div><div class="a" style="left:1065.0px;top:94px;width:1.0px;height:1.3px;background:#ffd700;opacity:0.32"></div><div class="a" style="left:1067.0px;top:94px;width:12.0px;height:1.3px;background:#9cdcfe;opacity:0.32"></div><div class="a" style="left:1080.0px;top:94px;width:1.0px;height:1.3px;background:#ffd700;opacity:0.32"></div><div class="a" style="left:1082.0px;top:94px;width:4.0px;height:1.3px;background:#c586c0;opacity:0.32"></div><div class="a" style="left:1087.0px;top:94px;width:19.0px;height:1.3px;background:#ce9178;opacity:0.32"></div><div class="a" style="left:1106.0px;top:94px;width:1.0px;height:1.3px;background:#d4d4d4;opacity:0.32"></div><div class="a" style="left:1058.0px;top:98px;width:6.0px;height:1.3px;background:#c586c0;opacity:0.32"></div><div class="a" style="left:1065.0px;top:98px;width:7.0px;height:1.3px;background:#c586c0;opacity:0.32"></div><div class="a" style="left:1073.0px;top:98px;width:8.0px;height:1.3px;background:#569cd6;opacity:0.32"></div><div class="a" style="left:1082.0px;top:98px;width:3.0px;height:1.3px;background:#dcdcaa;opacity:0.32"></div><div class="a" style="left:1085.0px;top:98px;width:2.0px;height:1.3px;background:#ffd700;opacity:0.32"></div><div class="a" style="left:1088.0px;top:98px;width:1.0px;height:1.3px;background:#ffd700;opacity:0.32"></div><div class="a" style="left:1060.0px;top:100px;width:5.0px;height:1.3px;background:#569cd6;opacity:0.32"></div><div class="a" style="left:1066.0px;top:100px;width:8.0px;height:1.3px;background:#d4d4d4;opacity:0.32"></div><div class="a" style="left:1075.0px;top:100px;width:1.0px;height:1.3px;background:#d4d4d4;opacity:0.32"></div><div class="a" style="left:1077.0px;top:100px;width:6.0px;height:1.3px;background:#dcdcaa;opacity:0.32"></div><div class="a" style="left:1083.0px;top:100px;width:2.0px;height:1.3px;background:#da70d6;opacity:0.32"></div><div class="a" style="left:1085.0px;top:100px;width:1.0px;height:1.3px;background:#d4d4d4;opacity:0.32"></div><div class="a" style="left:1060.0px;top:102px;width:5.0px;height:1.3px;background:#569cd6;opacity:0.32"></div><div class="a" style="left:1066.0px;top:102px;width:1.0px;height:1.3px;background:#da70d6;opacity:0.32"></div><div class="a" style="left:1067.0px;top:102px;width:4.0px;height:1.3px;background:#4ec9b0;opacity:0.32"></div><div class="a" style="left:1071.0px;top:102px;width:1.0px;height:1.3px;background:#d4d4d4;opacity:0.32"></div><div class="a" style="left:1073.0px;top:102px;width:7.0px;height:1.3px;background:#dcdcaa;opacity:0.32"></div><div class="a" style="left:1080.0px;top:102px;width:1.0px;height:1.3px;background:#da70d6;opacity:0.32"></div><div class="a" style="left:1082.0px;top:102px;width:1.0px;height:1.3px;background:#d4d4d4;opacity:0.32"></div><div class="a" style="left:1084.0px;top:102px;width:8.0px;height:1.3px;background:#dcdcaa;opacity:0.32"></div><div class="a" style="left:1092.0px;top:102px;width:1.0px;height:1.3px;background:#da70d6;opacity:0.32"></div><div class="a" style="left:1093.0px;top:102px;width:6.0px;height:1.3px;background:#ce9178;opacity:0.32"></div><div class="a" style="left:1099.0px;top:102px;width:1.0px;height:1.3px;background:#da70d6;opacity:0.32"></div><div class="a" style="left:1100.0px;top:102px;width:1.0px;height:1.3px;background:#d4d4d4;opacity:0.32"></div><div class="a" style="left:1060.0px;top:106px;width:6.0px;height:1.3px;background:#c586c0;opacity:0.32"></div><div class="a" style="left:1067.0px;top:106px;width:1.0px;height:1.3px;background:#da70d6;opacity:0.32"></div><div class="a" style="left:1062.0px;top:108px;width:1.0px;height:1.3px;background:#808080;opacity:0.32"></div><div class="a" style="left:1063.0px;top:108px;width:3.0px;height:1.3px;background:#569cd6;opacity:0.32"></div><div class="a" style="left:1067.0px;top:108px;width:9.0px;height:1.3px;background:#9cdcfe;opacity:0.32"></div><div class="a" style="left:1076.0px;top:108px;width:1.0px;height:1.3px;background:#d4d4d4;opacity:0.32"></div><div class="a" style="left:1077.0px;top:108px;width:11.0px;height:1.3px;background:#ce9178;opacity:0.32"></div><div class="a" style="left:1088.0px;top:108px;width:1.0px;height:1.3px;background:#808080;opacity:0.32"></div><div class="a" style="left:1064.0px;top:110px;width:1.0px;height:1.3px;background:#808080;opacity:0.32"></div><div class="a" style="left:1065.0px;top:110px;width:3.0px;height:1.3px;background:#569cd6;opacity:0.32"></div><div class="a" style="left:1069.0px;top:110px;width:9.0px;height:1.3px;background:#9cdcfe;opacity:0.32"></div><div class="a" style="left:1078.0px;top:110px;width:1.0px;height:1.3px;background:#d4d4d4;opacity:0.32"></div><div class="a" style="left:1079.0px;top:110px;width:5.0px;height:1.3px;background:#ce9178;opacity:0.32"></div><div class="a" style="left:1085.0px;top:110px;width:8.0px;height:1.3px;background:#ce9178;opacity:0.32"></div><div class="a" style="left:1094.0px;top:110px;width:12.0px;height:1.3px;background:#ce9178;opacity:0.32"></div><div class="a" style="left:1107.0px;top:110px;width:5.0px;height:1.3px;background:#ce9178;opacity:0.32"></div><div class="a" style="left:1112.0px;top:110px;width:1.0px;height:1.3px;background:#808080;opacity:0.32"></div><div class="a" style="left:1066.0px;top:112px;width:1.0px;height:1.3px;background:#808080;opacity:0.32"></div><div class="a" style="left:1067.0px;top:112px;width:12.0px;height:1.3px;background:#4ec9b0;opacity:0.32"></div><div class="a" style="left:1080.0px;top:112px;width:8.0px;height:1.3px;background:#9cdcfe;opacity:0.32"></div><div class="a" style="left:1088.0px;top:112px;width:1.0px;height:1.3px;background:#d4d4d4;opacity:0.32"></div><div class="a" style="left:1089.0px;top:112px;width:1.0px;height:1.3px;background:#179fff;opacity:0.32"></div><div class="a" style="left:1090.0px;top:112px;width:2.0px;height:1.3px;background:#b5cea8;opacity:0.32"></div><div class="a" style="left:1092.0px;top:112px;width:1.0px;height:1.3px;background:#179fff;opacity:0.32"></div><div class="a" style="left:1094.0px;top:112px;width:9.0px;height:1.3px;background:#9cdcfe;opacity:0.32"></div><div class="a" style="left:1103.0px;top:112px;width:1.0px;height:1.3px;background:#d4d4d4;opacity:0.32"></div><div class="a" style="left:1104.0px;top:112px;width:1.0px;height:1.3px;background:#ce9178;opacity:0.32"></div><div class="a" style="left:1106.0px;top:112px;width:16.0px;height:1.3px;background:#ce9178;opacity:0.32"></div><div class="a" style="left:1123.0px;top:112px;width:2.0px;height:1.3px;background:#808080;opacity:0.32"></div><div class="a" style="left:1066.0px;top:114px;width:1.0px;height:1.3px;background:#808080;opacity:0.32"></div><div class="a" style="left:1067.0px;top:114px;width:4.0px;height:1.3px;background:#4ec9b0;opacity:0.32"></div><div class="a" style="left:1072.0px;top:114px;width:9.0px;height:1.3px;background:#9cdcfe;opacity:0.32"></div><div class="a" style="left:1081.0px;top:114px;width:1.0px;height:1.3px;background:#d4d4d4;opacity:0.32"></div><div class="a" style="left:1082.0px;top:114px;width:5.0px;height:1.3px;background:#ce9178;opacity:0.32"></div><div class="a" style="left:1088.0px;top:114px;width:8.0px;height:1.3px;background:#ce9178;opacity:0.32"></div><div class="a" style="left:1097.0px;top:114px;width:12.0px;height:1.3px;background:#ce9178;opacity:0.32"></div><div class="a" style="left:1109.0px;top:114px;width:1.0px;height:1.3px;background:#808080;opacity:0.32"></div><div class="a" style="left:1110.0px;top:114px;width:6.0px;height:1.3px;background:#d4d4d4;opacity:0.32"></div><div class="a" style="left:1117.0px;top:114px;width:1.0px;height:1.3px;background:#179fff;opacity:0.32"></div><div class="a" style="left:1118.0px;top:114px;width:4.0px;height:1.3px;background:#4ec9b0;opacity:0.32"></div><div class="a" style="left:1122.0px;top:114px;width:1.0px;height:1.3px;background:#179fff;opacity:0.32"></div><div class="a" style="left:1123.0px;top:114px;width:1.0px;height:1.3px;background:#d4d4d4;opacity:0.32"></div><div class="a" style="left:1124.0px;top:114px;width:2.0px;height:1.3px;background:#808080;opacity:0.32"></div><div class="a" style="left:1126.0px;top:114px;width:4.0px;height:1.3px;background:#4ec9b0;opacity:0.32"></div><div class="a" style="left:1130.0px;top:114px;width:1.0px;height:1.3px;background:#808080;opacity:0.32"></div><div class="a" style="left:1066.0px;top:116px;width:1.0px;height:1.3px;background:#808080;opacity:0.32"></div><div class="a" style="left:1067.0px;top:116px;width:9.0px;height:1.3px;background:#4ec9b0;opacity:0.32"></div><div class="a" style="left:1068.0px;top:118px;width:4.0px;height:1.3px;background:#9cdcfe;opacity:0.32"></div><div class="a" style="left:1072.0px;top:118px;width:1.0px;height:1.3px;background:#d4d4d4;opacity:0.32"></div><div class="a" style="left:1073.0px;top:118px;width:1.0px;height:1.3px;background:#179fff;opacity:0.32"></div><div class="a" style="left:1074.0px;top:118px;width:8.0px;height:1.3px;background:#d4d4d4;opacity:0.32"></div><div class="a" style="left:1082.0px;top:118px;width:1.0px;height:1.3px;background:#179fff;opacity:0.32"></div><div class="a" style="left:1068.0px;top:120px;width:9.0px;height:1.3px;background:#9cdcfe;opacity:0.32"></div><div class="a" style="left:1077.0px;top:120px;width:1.0px;height:1.3px;background:#d4d4d4;opacity:0.32"></div><div class="a" style="left:1078.0px;top:120px;width:6.0px;height:1.3px;background:#ce9178;opacity:0.32"></div><div class="a" style="left:1068.0px;top:122px;width:11.0px;height:1.3px;background:#9cdcfe;opacity:0.32"></div><div class="a" style="left:1079.0px;top:122px;width:1.0px;height:1.3px;background:#d4d4d4;opacity:0.32"></div><div class="a" style="left:1080.0px;top:122px;width:7.0px;height:1.3px;background:#ce9178;opacity:0.32"></div><div class="a" style="left:1088.0px;top:122px;width:9.0px;height:1.3px;background:#ce9178;opacity:0.32"></div><div class="a" style="left:1066.0px;top:124px;width:2.0px;height:1.3px;background:#808080;opacity:0.32"></div><div class="a" style="left:1066.0px;top:126px;width:1.0px;height:1.3px;background:#808080;opacity:0.32"></div><div class="a" style="left:1067.0px;top:126px;width:6.0px;height:1.3px;background:#4ec9b0;opacity:0.32"></div><div class="a" style="left:1068.0px;top:128px;width:9.0px;height:1.3px;background:#9cdcfe;opacity:0.32"></div><div class="a" style="left:1077.0px;top:128px;width:1.0px;height:1.3px;background:#d4d4d4;opacity:0.32"></div><div class="a" style="left:1078.0px;top:128px;width:6.0px;height:1.3px;background:#ce9178;opacity:0.32"></div><div class="a" style="left:1068.0px;top:130px;width:7.0px;height:1.3px;background:#9cdcfe;opacity:0.32"></div><div class="a" style="left:1075.0px;top:130px;width:1.0px;height:1.3px;background:#d4d4d4;opacity:0.32"></div><div class="a" style="left:1076.0px;top:130px;width:1.0px;height:1.3px;background:#179fff;opacity:0.32"></div><div class="a" style="left:1077.0px;top:130px;width:2.0px;height:1.3px;background:#ffd700;opacity:0.32"></div><div class="a" style="left:1080.0px;top:130px;width:2.0px;height:1.3px;background:#569cd6;opacity:0.32"></div><div class="a" style="left:1083.0px;top:130px;width:7.0px;height:1.3px;background:#dcdcaa;opacity:0.32"></div><div class="a" style="left:1090.0px;top:130px;width:1.0px;height:1.3px;background:#ffd700;opacity:0.32"></div><div class="a" style="left:1091.0px;top:130px;width:8.0px;height:1.3px;background:#d4d4d4;opacity:0.32"></div><div class="a" style="left:1099.0px;top:130px;width:1.0px;height:1.3px;background:#d4d4d4;opacity:0.32"></div><div class="a" style="left:1100.0px;top:130px;width:7.0px;height:1.3px;background:#d4d4d4;opacity:0.32"></div><div class="a" style="left:1107.0px;top:130px;width:1.0px;height:1.3px;background:#d4d4d4;opacity:0.32"></div><div class="a" style="left:1108.0px;top:130px;width:5.0px;height:1.3px;background:#d4d4d4;opacity:0.32"></div><div class="a" style="left:1113.0px;top:130px;width:1.0px;height:1.3px;background:#ffd700;opacity:0.32"></div><div class="a" style="left:1114.0px;top:130px;width:1.0px;height:1.3px;background:#179fff;opacity:0.32"></div><div class="a" style="left:1066.0px;top:132px;width:1.0px;height:1.3px;background:#808080;opacity:0.32"></div><div class="a" style="left:1068.0px;top:134px;width:6.0px;height:1.3px;background:#d4d4d4;opacity:0.32"></div><div class="a" style="left:1066.0px;top:136px;width:2.0px;height:1.3px;background:#808080;opacity:0.32"></div><div class="a" style="left:1068.0px;top:136px;width:6.0px;height:1.3px;background:#4ec9b0;opacity:0.32"></div><div class="a" style="left:1074.0px;top:136px;width:1.0px;height:1.3px;background:#808080;opacity:0.32"></div><div class="a" style="left:1064.0px;top:138px;width:2.0px;height:1.3px;background:#808080;opacity:0.32"></div><div class="a" style="left:1066.0px;top:138px;width:3.0px;height:1.3px;background:#569cd6;opacity:0.32"></div><div class="a" style="left:1069.0px;top:138px;width:1.0px;height:1.3px;background:#808080;opacity:0.32"></div><div class="a" style="left:1062.0px;top:140px;width:2.0px;height:1.3px;background:#808080;opacity:0.32"></div><div class="a" style="left:1064.0px;top:140px;width:3.0px;height:1.3px;background:#569cd6;opacity:0.32"></div><div class="a" style="left:1067.0px;top:140px;width:1.0px;height:1.3px;background:#808080;opacity:0.32"></div><div class="a" style="left:1051px;top:92px;width:3px;height:4px;background:#1b81a8;"></div><div class="a" style="left:1051px;top:100px;width:3px;height:4px;background:#1b81a8;"></div><div class="a" style="left:1051px;top:108px;width:3px;height:32px;background:#1b81a8;"></div><div class="a" style="left:1133px;top:92px;width:1px;height:479px;background:rgba(128,128,128,0.2);"></div><div class="a" style="left:1134px;top:92px;width:4px;height:18px;background:#1b6f8f;"></div><div class="a" style="left:1134px;top:128px;width:4px;height:19px;background:#1b6f8f;"></div><div class="a" style="left:1134px;top:165px;width:4px;height:147px;background:#1b6f8f;"></div><div class="a" style="left:1134px;top:338px;width:13px;height:3px;background:#a0a0a0;"></div><div class="a" style="left:1147px;top:35px;width:1px;height:536px;background:#444444;"></div><div class="a" style="left:1148px;top:35px;width:772px;height:35px;background:#252526;"></div><div class="a" style="left:1148px;top:35px;width:143px;height:35px;background:#1e1e1e;"></div><svg style="left:1162px;top:43.2px" width="11.8" height="18"><text x="0" y="14" font-family="Liberation Sans" font-weight="bold" font-size="14" fill="#519aba" textLength="9.8" lengthAdjust="spacingAndGlyphs" stroke="#519aba" stroke-width="0.45">#</text></svg><div class="t" style="left:1179px;top:46.5px;font-size:13px;height:13px;line-height:13px;color:#cca700;font-weight:normal;font-family:'Liberation Sans',sans-serif;letter-spacing:-0.1px;">global.css</div><div class="t" style="left:1239.5px;top:47.2px;font-size:12.5px;height:12.5px;line-height:12.5px;color:#c2a000;font-weight:normal;font-family:'Liberation Sans',sans-serif;letter-spacing:-0.3px;">2,</div><div class="t" style="left:1252px;top:47.5px;font-size:12.5px;height:12.5px;line-height:12.5px;color:#c2a000;font-weight:bold;font-family:'Liberation Sans',sans-serif;letter-spacing:-0.5px;">M</div><svg style="left:1270px;top:45px" width="14" height="14" viewBox="0 0 14 14"><path d="M2.5 2.5 L11.5 11.5 M11.5 2.5 L2.5 11.5" stroke="#8b8b8b" stroke-width="1.3"/></svg><div class="a" style="left:1892px;top:52px;width:2px;height:2px;background:#c5c5c5;"></div><div class="a" style="left:1897px;top:52px;width:2px;height:2px;background:#c5c5c5;"></div><div class="a" style="left:1902px;top:52px;width:2px;height:2px;background:#c5c5c5;"></div><div class="t" style="left:1163px;top:75.0px;font-size:13px;height:13px;line-height:13px;color:#a9a9a9;font-weight:normal;font-family:'Liberation Sans',sans-serif;">app</div><svg style="left:1185px;top:73px" width="16" height="16" viewBox="0 0 16 16"><path d="M5.5 2.5 L11 8 L5.5 13.5" stroke="#a9a9a9" stroke-width="1.1" fill="none"/></svg><svg style="left:1206px;top:72px" width="11.8" height="18"><text x="0" y="14" font-family="Liberation Sans" font-weight="bold" font-size="14" fill="#519aba" textLength="9.8" lengthAdjust="spacingAndGlyphs" stroke="#519aba" stroke-width="0.45">#</text></svg><div class="t" style="left:1223px;top:75.0px;font-size:13px;height:13px;line-height:13px;color:#a9a9a9;font-weight:normal;font-family:'Liberation Sans',sans-serif;letter-spacing:-0.1px;">global.css</div><svg style="left:1279px;top:73px" width="16" height="16" viewBox="0 0 16 16"><path d="M5.5 2.5 L11 8 L5.5 13.5" stroke="#a9a9a9" stroke-width="1.1" fill="none"/></svg><div class="t" style="left:1295px;top:75.5px;font-size:12px;height:12px;line-height:12px;color:#a9a9a9;font-weight:normal;font-family:'Liberation Sans',sans-serif;letter-spacing:-0.2px;">...</div><div class="code" style="left:1182.3px;top:93px;color:#2b91af">1</div><div class="code" style="left:1182.3px;top:112px;color:#2b91af">2</div><div class="code" style="left:1182.3px;top:131px;color:#2b91af">3</div><div class="code" style="left:1182.3px;top:150px;color:#2b91af">4</div><div class="code" style="left:1182.3px;top:169px;color:#2b91af">5</div><div class="code" style="left:1182.3px;top:188px;color:#2b91af">6</div><div class="code" style="left:1182.3px;top:207px;color:#2b91af">7</div><div class="code" style="left:1182.3px;top:226px;color:#2b91af">8</div><div class="code" style="left:1182.3px;top:245px;color:#2b91af">9</div><div class="a" style="left:1215px;top:244px;width:606px;height:19px;background:transparent;border:2px solid #282828;border-right:none"></div><div class="a" style="left:1195px;top:149px;width:3px;height:114px;background:#487e02;"></div><div class="a" style="left:1215px;top:168px;width:1px;height:57px;background:#404040;"></div><div class="code" style="left:1215px;top:93px"><span style="color:#c586c0">@tailwind</span><span style="color:#d4d4d4"> components;</span>
<span style="color:#c586c0">@tailwind</span><span style="color:#d4d4d4"> utilities;</span>

<span style="color:#d7ba7d">.container</span><span style="color:#d4d4d4"> </span><span style="color:#ffd700">{</span>
<span style="color:#d4d4d4">  </span><span style="color:#9cdcfe">max-width</span><span style="color:#d4d4d4">: </span><span style="color:#b5cea8">800px</span><span style="color:#d4d4d4">;</span>
<span style="color:#d4d4d4">  </span><span style="color:#9cdcfe">margin</span><span style="color:#d4d4d4">: </span><span style="color:#b5cea8">0</span><span style="color:#d4d4d4"> </span><span style="color:#ce9178">auto</span><span style="color:#d4d4d4">;</span>
<span style="color:#d4d4d4">  </span><span style="color:#9cdcfe">padding</span><span style="color:#d4d4d4">: </span><span style="color:#b5cea8">16px</span><span style="color:#d4d4d4"> </span><span style="color:#b5cea8">24px</span><span style="color:#d4d4d4">;</span>
<span style="color:#ffd700">}</span>

</div><svg style="left:1215px;top:109px" width="70" height="3" viewBox="0 0 70 3"><path d="M0 0 L2 1.5 L4 0 L6 1.5 L8 0 L10 1.5 L12 0 L14 1.5 L16 0 L18 1.5 L20 0 L22 1.5 L24 0 L26 1.5 L28 0 L30 1.5 L32 0 L34 1.5 L36 0 L38 1.5 L40 0 L42 1.5 L44 0 L46 1.5 L48 0 L50 1.5 L52 0 L54 1.5 L56 0 L58 1.5 L60 0 L62 1.5 L64 0 L66 1.5 L68 0 L70 1.5" stroke="#cca700" stroke-width="1" fill="none"/></svg><svg style="left:1215px;top:128px" width="70" height="3" viewBox="0 0 70 3"><path d="M0 0 L2 1.5 L4 0 L6 1.5 L8 0 L10 1.5 L12 0 L14 1.5 L16 0 L18 1.5 L20 0 L22 1.5 L24 0 L26 1.5 L28 0 L30 1.5 L32 0 L34 1.5 L36 0 L38 1.5 L40 0 L42 1.5 L44 0 L46 1.5 L48 0 L50 1.5 L52 0 L54 1.5 L56 0 L58 1.5 L60 0 L62 1.5 L64 0 L66 1.5 L68 0 L70 1.5" stroke="#cca700" stroke-width="1" fill="none"/></svg><div class="a" style="left:1827px;top:92px;width:79px;height:4px;background:#7a6314;"></div><div class="a" style="left:1827px;top:92px;width:9px;height:4px;background:#d9a900;"></div><div class="a" style="left:1821px;top:98px;width:2px;height:12px;background:#487e02;"></div><div class="a" style="left:1828.0px;top:98px;width:10.0px;height:1.3px;background:#d7ba7d;opacity:0.32"></div><div class="a" style="left:1839.0px;top:98px;width:1.0px;height:1.3px;background:#ffd700;opacity:0.32"></div><div class="a" style="left:1830.0px;top:100px;width:9.0px;height:1.3px;background:#9cdcfe;opacity:0.32"></div><div class="a" style="left:1839.0px;top:100px;width:1.0px;height:1.3px;background:#d4d4d4;opacity:0.32"></div><div class="a" style="left:1841.0px;top:100px;width:5.0px;height:1.3px;background:#b5cea8;opacity:0.32"></div><div class="a" style="left:1846.0px;top:100px;width:1.0px;height:1.3px;background:#d4d4d4;opacity:0.32"></div><div class="a" style="left:1830.0px;top:102px;width:6.0px;height:1.3px;background:#9cdcfe;opacity:0.32"></div><div class="a" style="left:1836.0px;top:102px;width:1.0px;height:1.3px;background:#d4d4d4;opacity:0.32"></div><div class="a" style="left:1838.0px;top:102px;width:1.0px;height:1.3px;background:#b5cea8;opacity:0.32"></div><div class="a" style="left:1840.0px;top:102px;width:4.0px;height:1.3px;background:#ce9178;opacity:0.32"></div><div class="a" style="left:1844.0px;top:102px;width:1.0px;height:1.3px;background:#d4d4d4;opacity:0.32"></div><div class="a" style="left:1830.0px;top:104px;width:7.0px;height:1.3px;background:#9cdcfe;opacity:0.32"></div><div class="a" style="left:1837.0px;top:104px;width:1.0px;height:1.3px;background:#d4d4d4;opacity:0.32"></div><div class="a" style="left:1839.0px;top:104px;width:4.0px;height:1.3px;background:#b5cea8;opacity:0.32"></div><div class="a" style="left:1844.0px;top:104px;width:4.0px;height:1.3px;background:#b5cea8;opacity:0.32"></div><div class="a" style="left:1848.0px;top:104px;width:1.0px;height:1.3px;background:#d4d4d4;opacity:0.32"></div><div class="a" style="left:1828.0px;top:106px;width:1.0px;height:1.3px;background:#ffd700;opacity:0.32"></div><div class="a" style="left:1906px;top:92px;width:1px;height:479px;background:rgba(128,128,128,0.25);"></div><div class="a" style="left:1916px;top:92px;width:4px;height:28px;background:#d9a900;"></div><div class="a" style="left:1907px;top:135px;width:4px;height:86px;background:#3f6a12;"></div><div class="a" style="left:1907px;top:206px;width:13px;height:2px;background:#a0a0a0;"></div><div class="a" style="left:405px;top:571px;width:1515px;height:439px;background:#1e1e1e;"></div><div class="a" style="left:405px;top:571px;width:1515px;height:1px;background:#414141;"></div><div class="t" style="left:425px;top:584.5px;font-size:11px;height:11px;line-height:11px;color:#e7e7e7;font-weight:normal;font-family:'Liberation Sans',sans-serif;">终端</div><div class="t" style="left:471px;top:584.5px;font-size:11px;height:11px;line-height:11px;color:#969696;font-weight:normal;font-family:'Liberation Sans',sans-serif;">端口</div><div class="t" style="left:516px;top:584.5px;font-size:11px;height:11px;line-height:11px;color:#969696;font-weight:normal;font-family:'Liberation Sans',sans-serif;">问题</div><div class="t" style="left:592px;top:584.5px;font-size:11px;height:11px;line-height:11px;color:#969696;font-weight:normal;font-family:'Liberation Sans',sans-serif;">输出</div><div class="t" style="left:638px;top:584.5px;font-size:11px;height:11px;line-height:11px;color:#969696;font-weight:normal;font-family:'Liberation Sans',sans-serif;">调试控制台</div><div class="t" style="left:717px;top:584.5px;font-size:11px;height:11px;line-height:11px;color:#969696;font-weight:normal;font-family:'Liberation Sans',sans-serif;">注释</div><div class="a" style="left:423px;top:601px;width:26px;height:1.5px;background:#e7e7e7;"></div><div class="a" style="left:548px;top:581px;width:24px;height:18px;border-radius:9px;background:#4d4d4d;color:#ffffff;font-size:11px;text-align:center;line-height:18px">32</div><svg style="left:1866px;top:582px" width="14" height="14" viewBox="0 0 14 14"><path d="M2 9.5 L7 4.5 L12 9.5" stroke="#c5c5c5" stroke-width="1.1" fill="none"/></svg><svg style="left:1890px;top:582px" width="14" height="14" viewBox="0 0 14 14"><path d="M2 2 L12 12 M12 2 L2 12" stroke="#c5c5c5" stroke-width="1.1"/></svg><div class="term" style="left:425px;top:618px"><span style="color:#cccccc">PS F:\code\lcui-quick-start&gt; </span><span style="color:#f5f543">lcui</span><span style="color:#cccccc"> build</span>
<span style="color:#cccccc">Compiling app\about\logo.png</span>
<span style="color:#cccccc">Compiling app\about\page.tsx</span>
<span style="color:#cccccc">Compiling app\about\styles.module.scss</span>
<span style="color:#cccccc">Compiling app\global.css</span>
<span style="color:#cccccc">Compiling app\layout.tsx</span>
<span style="color:#cccccc">Compiling app\page.tsx</span>
<span style="color:#cccccc">Emitting assets\logo.8da28495.png</span>
<span style="color:#cccccc">Compiling package.json</span>
<span style="color:#cccccc">Compiling node_modules\@lcui\react-icons\dist\style.css</span>
<span style="color:#cccccc">Compiling node_modules\@lcui\react-icons\dist\FluentSystemIcons-Filled.ttf</span>
<span style="color:#cccccc">Compiling node_modules\@lcui\react-icons\dist\FluentSystemIcons-Regular.ttf</span>
<span style="color:#cccccc">Emitting assets\FluentSystemIcons-Filled.731bdd03.ttf</span>
<span style="color:#cccccc">Emitting assets\FluentSystemIcons-Regular.d4b7cae4.ttf</span>
<span style="color:#cccccc">Run xmake to build the project...</span>
<span style="color:#23d18b">[ 75%]: </span><span style="color:#cccccc">compiling.debug app\about\page.c</span>
<span style="color:#23d18b">[ 76%]: </span><span style="color:#cccccc">compiling.debug app\layout.c</span>
<span style="color:#23d18b">[ 76%]: </span><span style="color:#cccccc">compiling.debug app\main.c</span>
<span style="color:#23d18b">[ 77%]: </span><span style="color:#cccccc">compiling.debug app\page.c</span>
<span style="color:#23d18b">[ 99%]: </span><span style="color:#d670d6">linking.debug app.exe</span>
<span style="color:#23d18b">[100%]: build ok, spent 1.375s</span>
<span style="color:#cccccc">Compilation completed!</span>
<span style="color:#cccccc">PS F:\code\lcui-quick-start&gt; </span><span style="color:#f5f543">xmake</span><span style="color:#cccccc"> run app</span>
</div><div class="a" style="left:412px;top:621.5px;width:8px;height:8px;border-radius:4px;background:#2b91d1"></div><div class="a" style="left:412px;top:996px;width:8px;height:8px;border-radius:4px;border:1.5px solid #8b8b8b"></div><div class="a" style="left:1909px;top:616px;width:4px;height:4px;background:#2b91d1;"></div><div class="a" style="left:1909px;top:709px;width:3px;height:6px;background:#6b6b6b;"></div><div class="a" style="left:0px;top:1010px;width:1920px;height:22px;background:#007acc;"></div><div class="a" style="left:0px;top:1010px;width:34px;height:22px;background:#16825d;"></div><div class="a" style="left:0px;top:1032px;width:1920px;height:1px;background:#c8c8c8;"></div><svg style="left:9px;top:1013px" width="16" height="16" viewBox="0 0 16 16"><path d="M3.2 5 L7.9 9.5 L3.5 13.8 M12.9 2 L9.1 6 L12.9 10" stroke="#ffffff" stroke-width="1.1" fill="none"/></svg><svg style="left:40px;top:1013px" width="16" height="16" viewBox="0 0 16 16"><circle cx="4.5" cy="3.5" r="1.6" stroke="#fff" stroke-width="1" fill="none"/><circle cx="4.5" cy="13" r="1.6" stroke="#fff" stroke-width="1" fill="none"/><circle cx="11.5" cy="5.5" r="1.6" stroke="#fff" stroke-width="1" fill="none"/><path d="M4.5 5.1 V11.4 M11.5 7.1 C11.5 10 5 9.5 4.8 11.5" stroke="#fff" stroke-width="1" fill="none"/></svg><div class="t" style="left:57px;top:1015.5px;font-size:12px;height:12px;line-height:12px;color:#ffffff;font-weight:normal;font-family:'Liberation Sans',sans-serif;">develop*+</div><svg style="left:118px;top:1014px" width="16" height="16" viewBox="0 0 16 16"><path d="M4 11 H3.5 A2.5 2.5 0 0 1 3.5 6 A3.5 3.5 0 0 1 10.5 5 A2.7 2.7 0 0 1 12.5 11 H12" stroke="#fff" stroke-width="1" fill="none"/><path d="M8 13.5 V8 M6 10 L8 8 L10 10" stroke="#fff" stroke-width="1" fill="none"/></svg><svg style="left:147px;top:1014px" width="14" height="14" viewBox="0 0 14 14"><circle cx="7" cy="7" r="5.5" stroke="#fff" stroke-width="1" fill="none"/><path d="M4.7 4.7 L9.3 9.3 M9.3 4.7 L4.7 9.3" stroke="#fff" stroke-width="1"/></svg><div class="t" style="left:164px;top:1015.5px;font-size:12px;height:12px;line-height:12px;color:#ffffff;font-weight:normal;font-family:'Liberation Sans',sans-serif;">0</div><svg style="left:176px;top:1014px" width="14" height="14" viewBox="0 0 14 14"><path d="M7 1.5 L12.8 12 H1.2 Z" stroke="#fff" stroke-width="1" fill="none" stroke-linejoin="round"/><path d="M7 5 V9 M7 10 V11" stroke="#fff" stroke-width="1"/></svg><div class="t" style="left:192px;top:1015.5px;font-size:12px;height:12px;line-height:12px;color:#ffffff;font-weight:normal;font-family:'Liberation Sans',sans-serif;">2</div><svg style="left:202px;top:1014px" width="14" height="14" viewBox="0 0 14 14"><circle cx="7" cy="7" r="5.5" stroke="#fff" stroke-width="1" fill="none"/><path d="M7 6 V10.5 M7 3.8 V4.8" stroke="#fff" stroke-width="1.2"/></svg><div class="t" style="left:218px;top:1015.5px;font-size:12px;height:12px;line-height:12px;color:#ffffff;font-weight:normal;font-family:'Liberation Sans',sans-serif;">30</div><svg style="left:248px;top:1014px" width="14" height="14" viewBox="0 0 14 14"><path d="M7 6 V13 M4.5 13 L7 6 L9.5 13" stroke="#fff" stroke-width="1" fill="none"/><circle cx="7" cy="5" r="1.2" fill="#fff"/><path d="M3.5 2 A5 5 0 0 0 3.5 8 M10.5 2 A5 5 0 0 1 10.5 8 M1.5 0.5 A7 7 0 0 0 1.5 9.5 M12.5 0.5 A7 7 0 0 1 12.5 9.5" stroke="#fff" stroke-width="1" fill="none"/></svg><div class="t" style="left:264px;top:1015.5px;font-size:12px;height:12px;line-height:12px;color:#ffffff;font-weight:normal;font-family:'Liberation Sans',sans-serif;">0</div><div class="t" style="left:287px;top:1015.5px;font-size:12px;height:12px;line-height:12px;color:#ffffff;font-weight:normal;font-family:'Liberation Sans',sans-serif;">XMake: lcui-quick-start</div><div class="t" style="left:425px;top:1015.5px;font-size:12px;height:12px;line-height:12px;color:#ffffff;font-weight:normal;font-family:'Liberation Sans',sans-serif;">windows</div><div class="t" style="left:487px;top:1015.5px;font-size:12px;height:12px;line-height:12px;color:#ffffff;font-weight:normal;font-family:'Liberation Sans',sans-serif;">x64</div><div class="t" style="left:521px;top:1015.5px;font-size:12px;height:12px;line-height:12px;color:#ffffff;font-weight:normal;font-family:'Liberation Sans',sans-serif;">debug</div><div class="t" style="left:571px;top:1015.5px;font-size:12px;height:12px;line-height:12px;color:#ffffff;font-weight:normal;font-family:'Liberation Sans',sans-serif;">toolchain</div><svg style="left:637px;top:1014px" width="14" height="14" viewBox="0 0 14 14"><circle cx="7" cy="7" r="2" stroke="#fff" stroke-width="1" fill="none"/><circle cx="7" cy="7" r="5" stroke="#fff" stroke-width="1.6" fill="none" stroke-dasharray="2 1.9"/></svg><div class="t" style="left:653px;top:1015.5px;font-size:12px;height:12px;line-height:12px;color:#ffffff;font-weight:normal;font-family:'Liberation Sans',sans-serif;">Build</div><div class="t" style="left:697px;top:1015.5px;font-size:12px;height:12px;line-height:12px;color:#ffffff;font-weight:normal;font-family:'Liberation Sans',sans-serif;">default</div><svg style="left:750px;top:1014px" width="14" height="14" viewBox="0 0 14 14"><path d="M3 1.5 L12 7 L3 12.5 Z" stroke="#fff" stroke-width="1" fill="none" stroke-linejoin="round"/></svg><svg style="left:779px;top:1014px" width="14" height="14" viewBox="0 0 14 14"><ellipse cx="7" cy="8" rx="3" ry="4" stroke="#fff" stroke-width="1" fill="none"/><path d="M1 6 H4 M10 6 H13 M1 10 H4 M10 10 H13 M5 2 L6 4 M9 2 L8 4 M4 8 H10" stroke="#fff" stroke-width="1"/></svg><svg style="left:809px;top:1014px" width="14" height="14" viewBox="0 0 14 14"><rect x="2.5" y="2.5" width="9" height="9" stroke="#fff" stroke-width="1.2" fill="none"/></svg><svg style="left:838px;top:1014px" width="14" height="14" viewBox="0 0 14 14"><path d="M2.2 7 A5 5 0 1 0 3.5 3.3" stroke="#fff" stroke-width="1.1" fill="none"/><path d="M1.5 1.5 V4.5 H4.5" stroke="#fff" stroke-width="1.1" fill="none"/><path d="M7 4 V7.5 L9.5 9" stroke="#fff" stroke-width="1.1" fill="none"/></svg><div class="t" style="left:1293px;top:1015.5px;font-size:12px;height:12px;line-height:12px;color:#ffffff;font-weight:normal;font-family:'Liberation Sans',sans-serif;">行 28，列 1</div><div class="t" style="left:1370px;top:1015.5px;font-size:12px;height:12px;line-height:12px;color:#ffffff;font-weight:normal;font-family:'Liberation Sans',sans-serif;">空格: 2</div><div class="t" style="left:1423px;top:1015.5px;font-size:12px;height:12px;line-height:12px;color:#ffffff;font-weight:normal;font-family:'Liberation Sans',sans-serif;">UTF-8</div><div class="t" style="left:1470px;top:1015.5px;font-size:12px;height:12px;line-height:12px;color:#ffffff;font-weight:normal;font-family:'Liberation Sans',sans-serif;">CRLF</div><div class="t" style="left:1530px;top:1015.5px;font-size:12px;height:12px;line-height:12px;color:#ffffff;font-weight:normal;font-family:'Liberation Sans',sans-serif;">TypeScript JSX</div><div class="t" style="left:1640px;top:1015.5px;font-size:12px;height:12px;line-height:12px;color:#ffffff;font-weight:normal;font-family:'Liberation Sans',sans-serif;">Spell</div><div class="t" style="left:1697px;top:1015.5px;font-size:12px;height:12px;line-height:12px;color:#ffffff;font-weight:normal;font-family:'Liberation Sans',sans-serif;">Prettier</div><div class="t" style="left:1768px;top:1015.5px;font-size:12px;height:12px;line-height:12px;color:#ffffff;font-weight:normal;font-family:'Liberation Sans',sans-serif;">ZH-CN</div><div class="t" style="left:1838px;top:1015.5px;font-size:12px;height:12px;line-height:12px;color:#ffffff;font-weight:normal;font-family:'Liberation Sans',sans-serif;">ZH-CN</div><div class="t" style="left:1512px;top:1015.5px;font-size:11px;height:11px;line-height:11px;color:#ffffff;font-weight:normal;font-family:'Liberation Sans',sans-serif;letter-spacing:-0.5px;">{ }</div><svg style="left:1622px;top:1014px" width="14" height="14" viewBox="0 0 14 14"><path d="M2 7.5 L5.5 11 L12 3" stroke="#fff" stroke-width="1.1" fill="none"/></svg><svg style="left:1679px;top:1014px" width="16" height="14" viewBox="0 0 16 14"><path d="M1 7.5 L4.5 11 L11 3 M7 10 L8 11 L14.5 3" stroke="#fff" stroke-width="1.1" fill="none"/></svg><svg style="left:1751px;top:1014px" width="14" height="14" viewBox="0 0 14 14"><circle cx="7" cy="7" r="5.5" stroke="#fff" stroke-width="1" fill="none"/><ellipse cx="7" cy="7" rx="2.5" ry="5.5" stroke="#fff" stroke-width="1" fill="none"/><path d="M1.5 7 H12.5 M2.5 4 H11.5 M2.5 10 H11.5" stroke="#fff" stroke-width="0.9"/></svg><svg style="left:1821px;top:1014px" width="14" height="14" viewBox="0 0 14 14"><path d="M1 8 C3 3.5 11 3.5 13 8" stroke="#fff" stroke-width="1.1" fill="none"/><circle cx="7" cy="8" r="2" stroke="#fff" stroke-width="1.1" fill="none"/></svg><svg style="left:1890px;top:1013px" width="14" height="16" viewBox="0 0 14 16"><path d="M3 11 V7 A4 4 0 0 1 11 7 V11 L12.5 12.5 H1.5 Z M5.5 13.5 A1.5 1.5 0 0 0 8.5 13.5" stroke="#fff" stroke-width="1.1" fill="none" stroke-linejoin="round"/></svg><div class="a" style="left:1069px;top:344px;width:802px;height:632px;border-radius:8px;background:#ffffff;border:1px solid #8764b8;overflow:hidden;box-shadow:0 8px 30px rgba(0,0,0,0.45)"><div class="a" style="left:0;top:0;width:800px;height:30px;background:#8764b8"></div><div class="a" style="left:0;top:30px;width:800px;height:40px;background:#e2e8f0"></div><div class="a" style="left:306px;top:34px;width:89px;height:36px;background:#ffffff;border-radius:4px 4px 0 0"></div></div><svg style="left:1078px;top:352px" width="16" height="14" viewBox="0 0 16 14"><rect x="0.5" y="0.5" width="15" height="13" fill="#e8eef0" stroke="#c8d0d4"/><rect x="1.5" y="2" width="8" height="10.5" fill="#2e9b7a"/><rect x="1.5" y="2" width="8" height="5" fill="#3a7fb0" opacity="0.6"/><rect x="11" y="2.5" width="3.5" height="3" fill="#8cc8b0"/></svg><div class="t" style="left:1099px;top:353.5px;font-size:12px;height:12px;line-height:12px;color:#ffffff;font-weight:normal;font-family:'Liberation Sans',sans-serif;letter-spacing:-0.2px;">LCUI Display</div><div class="a" style="left:1750px;top:359px;width:11px;height:1px;background:#ffffff;"></div><svg style="left:1795px;top:353px" width="12" height="12" viewBox="0 0 12 12"><rect x="0.5" y="0.5" width="10" height="10" stroke="#fff" stroke-width="1" fill="none"/></svg><svg style="left:1841px;top:353px" width="12" height="12" viewBox="0 0 12 12"><path d="M0.5 0.5 L11 11 M11 0.5 L0.5 11" stroke="#fff" stroke-width="1"/></svg><div class="t" style="left:1400px;top:389.0px;font-size:15px;height:15px;line-height:15px;color:#111111;font-weight:normal;font-family:'Liberation Sans',sans-serif;">Home</div><div class="t" style="left:1497px;top:389.0px;font-size:15px;height:15px;line-height:15px;color:#111111;font-weight:normal;font-family:'Liberation Sans',sans-serif;">About</div><svg style="left:1450px;top:458px" width="40" height="40" viewBox="0 0 40 40"><path d="M24.3 6.4 A15.5 15.5 0 1 0 34.4 22.4" stroke="#eab308" stroke-width="2.4" fill="none" stroke-linecap="round"/><circle cx="14.2" cy="17.4" r="2" fill="#eab308"/><circle cx="25" cy="17.4" r="2" fill="#eab308"/><path d="M12.6 25.5 Q20.2 32.5 27.8 25.5" stroke="#eab308" stroke-width="2.3" fill="none" stroke-linecap="round"/><path d="M29.2 0.5999999999999996 Q30.496 6.504 36.4 7.8 Q30.496 9.096 29.2 15.0 Q27.904 9.096 22.0 7.8 Q27.904 6.504 29.2 0.5999999999999996 Z" fill="#eab308"/><path d="M35.6 12.899999999999999 Q36.374 16.426 39.9 17.2 Q36.374 17.974 35.6 21.5 Q34.826 17.974 31.3 17.2 Q34.826 16.426 35.6 12.899999999999999 Z" fill="#eab308"/></svg><div class="t" style="left:1404px;top:531.5px;font-size:25px;height:25px;line-height:25px;color:#000000;font-weight:normal;font-family:'Liberation Sans',sans-serif;letter-spacing:-0.25px;">Hello, LCUI!</div><div class="a" style="left:1371px;top:584px;width:198px;height:32px;border:1.5px solid #2b8ef0;background:#fff;box-shadow:0 0 2px rgba(43,142,240,0.3)"></div><div class="a" style="left:1382px;top:590px;width:1px;height:20px;background:#000000;"></div><div class="t" style="left:1383px;top:592.8px;font-size:14.5px;height:14.5px;line-height:14.5px;color:#9a9a9a;font-weight:normal;font-family:'Liberation Sans',sans-serif;letter-spacing:-0.3px;">Please input...</div><div class="a" style="left:1434px;top:624px;width:72px;height:32px;border:1px solid #e3e3e3;background:#fff"></div><div class="t" style="left:1445px;top:633.2px;font-size:14.5px;height:14.5px;line-height:14.5px;color:#111111;font-weight:normal;font-family:'Liberation Sans',sans-serif;letter-spacing:-0.3px;">Change</div></body></html>
